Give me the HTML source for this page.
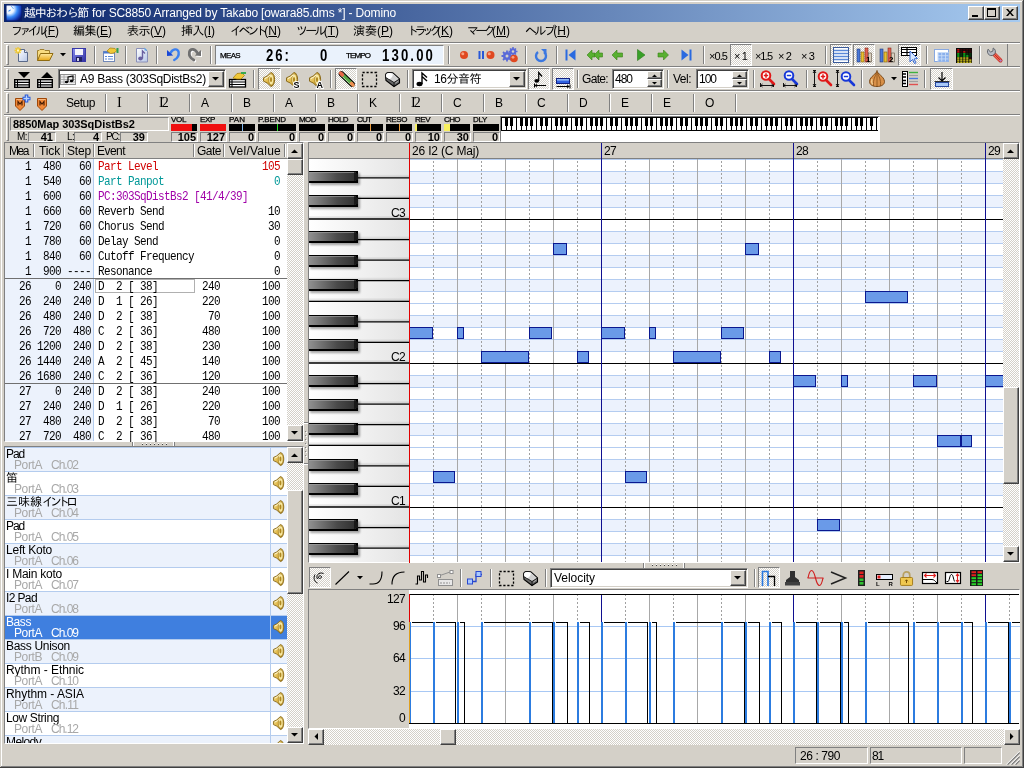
<!DOCTYPE html>
<html lang="ja"><head><meta charset="utf-8"><title>Domino</title>
<style>
html,body{margin:0;padding:0;background:#d4d0c8;overflow:hidden}
body{width:1024px;height:768px;position:relative;font-family:"Liberation Sans","IPAGothic","Noto Sans CJK JP",sans-serif;font-size:12px;color:#000}
#win{position:absolute;left:0;top:0;width:1024px;height:768px;overflow:hidden;background:#d4d0c8;will-change:transform}
#win div{position:absolute;box-sizing:border-box}
.t{white-space:nowrap;line-height:12px;font-size:12px}
.m{white-space:nowrap;font-family:"Liberation Mono","IPAGothic",monospace;font-size:11px;letter-spacing:-0.6px;line-height:12px;transform:scaleY(1.2);transform-origin:0 50%}
.mr{white-space:nowrap;font-family:"Liberation Mono","IPAGothic",monospace;font-size:11px;letter-spacing:-0.6px;line-height:12px;transform:scaleY(1.2);transform-origin:100% 50%;text-align:right}
.b{white-space:nowrap;font-weight:bold;font-size:11px;line-height:11px}
.raised{background:#d4d0c8;border:1px solid;border-color:#fff #404040 #404040 #fff;box-shadow:inset -1px -1px 0 #808080,inset 1px 1px 0 #d4d0c8}
.sunken{border:1px solid;border-color:#808080 #fff #fff #808080;box-shadow:inset 1px 1px 0 #404040,inset -1px -1px 0 #d4d0c8}
.sunk1{border:1px solid;border-color:#808080 #fff #fff #808080}
.chk{background-color:#fff;background-image:linear-gradient(45deg,#d4d0c8 25%,transparent 25%,transparent 75%,#d4d0c8 75%),linear-gradient(45deg,#d4d0c8 25%,transparent 25%,transparent 75%,#d4d0c8 75%);background-size:2px 2px;background-position:0 0,1px 1px}
svg{position:absolute;overflow:visible}

</style></head><body>
<div id="win">
<div style="left:0px;top:0px;width:1024px;height:768px;background:#d4d0c8"></div>
<div style="left:1px;top:1px;width:1021px;height:1px;background:#ffffff"></div>
<div style="left:1px;top:1px;width:1px;height:765px;background:#ffffff"></div>
<div style="left:1022px;top:1px;width:1px;height:766px;background:#808080"></div>
<div style="left:1px;top:766px;width:1022px;height:1px;background:#808080"></div>
<div style="left:1023px;top:0px;width:1px;height:768px;background:#404040"></div>
<div style="left:0px;top:767px;width:1024px;height:1px;background:#404040"></div>
<div style="left:4px;top:4px;width:1016px;height:18px;background:linear-gradient(90deg,#0a246a 0%,#a6caf0 100%)"></div>
<svg style="left:6px;top:5px" width="16" height="16" viewBox="0 0 16 16"><defs><radialGradient id="ig" cx="0.2" cy="0.25" r="0.95"><stop offset="0" stop-color="#ffffff"/><stop offset="0.3" stop-color="#e8f2ff"/><stop offset="0.55" stop-color="#3c8cf8"/><stop offset="0.85" stop-color="#1030a8"/><stop offset="1" stop-color="#081a68"/></radialGradient></defs><rect x="0" y="0" width="16" height="16" fill="#081a68"/><rect x="0.5" y="0.5" width="15" height="15" fill="url(#ig)"/><path d="M2 6.5 Q2.5 4.5 5 4.5 Q4.5 7 2 6.5 Z M5 1.5 L7.5 3.5 L6 2 Z" fill="#4a98f8"/><path d="M5 1 Q7 2.5 7.5 4" stroke="#58a0f8" stroke-width=".8" fill="none"/></svg>
<div class="t" style="left:24px;top:7px;color:#fff;letter-spacing:-1.33px">越中おわら節</div>
<div class="t" style="left:92px;top:7px;color:#fff;letter-spacing:-0.16px">for SC8850 Arranged by Takabo [owara85.dms *] - Domino</div>
<div class="raised" style="left:968px;top:6px;width:16px;height:14px;"></div>
<div style="left:972px;top:15px;width:6px;height:2px;background:#000"></div>
<div class="raised" style="left:984px;top:6px;width:16px;height:14px;"></div>
<div style="left:987px;top:8px;width:9px;height:9px;border:1px solid #000;border-top:2px solid #000"></div>
<div class="raised" style="left:1002px;top:6px;width:16px;height:14px;"></div>
<svg style="left:1006px;top:9px" width="8" height="7" viewBox="0 0 8 7"><path d="M0 0 H2 L4 2.5 L6 0 H8 L5 3.5 L8 7 H6 L4 4.5 L2 7 H0 L3 3.5 Z" fill="#000"/></svg>
<div class="t" style="left:11px;top:25px;"><span style="letter-spacing:-3.84px">ファイル</span>(<u>F</u>)</div>
<div class="t" style="left:73px;top:25px;"><span style="letter-spacing:-0.51px">編集</span>(<u>E</u>)</div>
<div class="t" style="left:127px;top:25px;"><span style="letter-spacing:-0.51px">表示</span>(<u>V</u>)</div>
<div class="t" style="left:181px;top:25px;"><span style="letter-spacing:-0.67px">挿入</span>(<u>I</u>)</div>
<div class="t" style="left:230px;top:25px;"><span style="letter-spacing:-3.42px">イベント</span>(<u>N</u>)</div>
<div class="t" style="left:296px;top:25px;"><span style="letter-spacing:-2.78px">ツール</span>(<u>T</u>)</div>
<div class="t" style="left:353px;top:25px;"><span style="letter-spacing:-0.01px">演奏</span>(<u>P</u>)</div>
<div class="t" style="left:407px;top:25px;"><span style="letter-spacing:-4.50px">トラック</span>(<u>K</u>)</div>
<div class="t" style="left:467px;top:25px;"><span style="letter-spacing:-3.67px">マーク</span>(<u>M</u>)</div>
<div class="t" style="left:525px;top:25px;"><span style="letter-spacing:-2.56px">ヘルプ</span>(<u>H</u>)</div>
<svg width="0" height="0" style="left:0;top:0"><defs>
<linearGradient id="gPage" x1="0" y1="0" x2="1" y2="1"><stop offset="0" stop-color="#ffffff"/><stop offset="1" stop-color="#b8c8e8"/></linearGradient>
<linearGradient id="gFold" x1="0" y1="0" x2="0" y2="1"><stop offset="0" stop-color="#ffe9a0"/><stop offset="1" stop-color="#e8a818"/></linearGradient>
<linearGradient id="gSave" x1="0" y1="0" x2="1" y2="1"><stop offset="0" stop-color="#8a8ef0"/><stop offset="1" stop-color="#3030a0"/></linearGradient>
<linearGradient id="gSpk" x1="0" y1="0" x2="1" y2="0"><stop offset="0" stop-color="#fff4c0"/><stop offset="0.5" stop-color="#e8c050"/><stop offset="1" stop-color="#a07818"/></linearGradient>
<linearGradient id="gSpk2" x1="0" y1="0" x2="1" y2="1"><stop offset="0" stop-color="#f8e8a8"/><stop offset="0.5" stop-color="#e0b848"/><stop offset="1" stop-color="#a07818"/></linearGradient>
<linearGradient id="gBk" x1="0" y1="0" x2="1" y2="0"><stop offset="0" stop-color="#909090"/><stop offset="0.6" stop-color="#4a4a4a"/><stop offset="1" stop-color="#303030"/></linearGradient>
<linearGradient id="gWk" x1="0" y1="0" x2="1" y2="0"><stop offset="0" stop-color="#ffffff"/><stop offset="1" stop-color="#e4e4e4"/></linearGradient>
</defs></svg>
<div style="left:4px;top:42px;width:1016px;height:1px;background:#808080"></div>
<div style="left:4px;top:43px;width:1016px;height:1px;background:#ffffff"></div>
<div style="left:4px;top:66px;width:1016px;height:1px;background:#808080"></div>
<div style="left:4px;top:67px;width:1016px;height:1px;background:#ffffff"></div>
<div style="left:4px;top:90px;width:1016px;height:1px;background:#808080"></div>
<div style="left:4px;top:91px;width:1016px;height:1px;background:#ffffff"></div>
<div style="left:4px;top:114px;width:1016px;height:1px;background:#808080"></div>
<div style="left:4px;top:115px;width:1016px;height:1px;background:#ffffff"></div>
<div style="left:6px;top:45px;width:3px;height:20px;background:#d4d0c8;border-left:1px solid #ffffff;border-top:1px solid #ffffff;border-right:1px solid #808080;border-bottom:1px solid #808080"></div>
<div style="left:6px;top:69px;width:3px;height:20px;background:#d4d0c8;border-left:1px solid #ffffff;border-top:1px solid #ffffff;border-right:1px solid #808080;border-bottom:1px solid #808080"></div>
<div style="left:6px;top:93px;width:3px;height:20px;background:#d4d0c8;border-left:1px solid #ffffff;border-top:1px solid #ffffff;border-right:1px solid #808080;border-bottom:1px solid #808080"></div>
<svg style="left:14px;top:46px" width="16" height="17" viewBox="0 0 16 17" ><path d="M4.5 3.5 H10.5 L13.5 6.5 V15.5 H4.5 Z" fill="url(#gPage)" stroke="#5a6a8a"/><path d="M10.5 3.5 V6.5 H13.5" fill="#e8eef8" stroke="#5a6a8a"/><path d="M4 1 V8 M0.5 4.5 H7.5 M1.5 2 L6.5 7 M6.5 2 L1.5 7" stroke="#f0c830" stroke-width="1.3"/><rect x="3" y="3.5" width="2" height="2" fill="#fff8c0"/></svg>
<svg style="left:37px;top:48px" width="17" height="14" viewBox="0 0 17 14" ><path d="M0.5 12.5 V2.5 H2 L3 1.5 H7 L8 2.5 H12.5 V5" fill="#f8dc80" stroke="#a08030"/><path d="M0.5 12.5 L3.5 5.5 H16 L12.5 12.5 Z" fill="url(#gFold)" stroke="#906c10"/></svg>
<svg style="left:60px;top:53px" width="6" height="4" viewBox="0 0 6 4" ><path d="M0 0 H6 L3 3.2 Z" fill="#000"/></svg>
<svg style="left:72px;top:48px" width="14" height="14" viewBox="0 0 14 14" ><rect x="0.5" y="0.5" width="13" height="13" fill="url(#gSave)" stroke="#3838a8"/><rect x="3" y="1" width="8" height="6" fill="#f4f4fc"/><rect x="4" y="9" width="6" height="4.5" fill="#202060"/><rect x="5" y="10" width="2" height="3" fill="#d0d0e8"/></svg>
<div style="left:94px;top:46px;width:1px;height:18px;background:#808080"></div>
<div style="left:95px;top:46px;width:1px;height:18px;background:#ffffff"></div>
<svg style="left:102px;top:47px" width="17" height="15" viewBox="0 0 17 15" ><rect x="1.5" y="4.5" width="11" height="10" fill="#fff" stroke="#7088b8"/><rect x="1.5" y="4.5" width="11" height="2" fill="#4a78d0"/><path d="M3 9.5 H5 M6 9.5 H11 M3 12 H5 M6 12 H11" stroke="#5a88d8" stroke-width="1.2"/><path d="M5 4 L8 1 L13 1.5 L15 3.5 L12 6 L8.5 6.5 Z" fill="#f0c838" stroke="#b08818" stroke-width=".8"/><rect x="14.5" y="1" width="2" height="5" fill="#30a050"/></svg>
<div style="left:125px;top:46px;width:1px;height:18px;background:#808080"></div>
<div style="left:126px;top:46px;width:1px;height:18px;background:#ffffff"></div>
<svg style="left:135px;top:47px" width="14" height="16" viewBox="0 0 14 16" ><path d="M1.5 1.5 H9.5 L12.5 4.5 V15 H1.5 Z" fill="url(#gPage)" stroke="#8a90b8"/><path d="M9.5 0.5 L12.5 3.5 H9.5 Z" fill="#58a0e8"/><ellipse cx="5.5" cy="11.5" rx="2.3" ry="1.9" fill="#6a60a0"/><path d="M7.5 11.5 V4 L10 6.5" fill="none" stroke="#6a60a0" stroke-width="1.4"/></svg>
<div style="left:156px;top:46px;width:1px;height:18px;background:#808080"></div>
<div style="left:157px;top:46px;width:1px;height:18px;background:#ffffff"></div>
<svg style="left:166px;top:47px" width="15" height="15" viewBox="0 0 15 15" ><path d="M4.5 6 C6.5 2 11.5 0.8 12.6 5 C13.2 8.5 11 11.5 8.2 13" fill="none" stroke="#3c80f0" stroke-width="2.4" stroke-linecap="round"/><path d="M1 3 V9 L7.2 8.6 Z" fill="#1848d8"/></svg>
<svg style="left:187px;top:47px" width="16" height="15" viewBox="0 0 16 15" ><g transform="translate(1,1)"><path d="M10.5 6 C8.5 2 3.5 0.8 2.4 5 C1.8 8.5 4 11.5 6.8 13" fill="none" stroke="#fff" stroke-width="2.8" stroke-linecap="round"/><path d="M14 3 V9 L7.8 8.6 Z" fill="#fff"/></g><path d="M10.5 6 C8.5 2 3.5 0.8 2.4 5 C1.8 8.5 4 11.5 6.8 13" fill="none" stroke="#707070" stroke-width="2.8" stroke-linecap="round"/><path d="M14 3 V9 L7.8 8.6 Z" fill="#707070"/></svg>
<div style="left:210px;top:46px;width:1px;height:18px;background:#808080"></div>
<div style="left:211px;top:46px;width:1px;height:18px;background:#ffffff"></div>
<div style="left:215px;top:45px;width:229px;height:20px;background:#eaf2fc;border:1px solid;border-color:#808080 #fff #fff #808080"></div>
<div class="t" style="left:220px;top:52px;font-size:8px;line-height:8px;-webkit-text-stroke:.25px #000;letter-spacing:-0.67px">MEAS</div>
<div class="t lcd" style="left:266px;top:48px;font-size:16px;line-height:15px;font-weight:bold;transform:scaleX(.82);transform-origin:0 0;letter-spacing:2.45px">26:</div>
<div class="t lcd" style="left:320px;top:48px;font-size:16px;line-height:15px;font-weight:bold;transform:scaleX(.82);transform-origin:0 0;letter-spacing:0.85px">0</div>
<div class="t" style="left:346px;top:52px;font-size:8px;line-height:8px;-webkit-text-stroke:.25px #000;letter-spacing:-0.89px">TEMPO</div>
<div class="t lcd" style="left:382px;top:48px;font-size:16px;line-height:15px;font-weight:bold;transform:scaleX(.82);transform-origin:0 0;letter-spacing:2.62px">130.00</div>
<div style="left:448px;top:46px;width:1px;height:18px;background:#808080"></div>
<div style="left:449px;top:46px;width:1px;height:18px;background:#ffffff"></div>
<svg style="left:459px;top:50px" width="10" height="10" viewBox="0 0 10 10" ><circle cx="5" cy="5" r="4" fill="#e04820"/><circle cx="3.8" cy="3.8" r="1.5" fill="#f8a080"/></svg>
<svg style="left:478px;top:50px" width="18" height="10" viewBox="0 0 18 10" ><rect x="0.5" y="1" width="2" height="8" fill="#2858d8"/><rect x="4" y="1" width="2" height="8" fill="#2858d8"/><circle cx="12.5" cy="5" r="4" fill="#e04820"/><circle cx="11.3" cy="3.8" r="1.5" fill="#f8a080"/></svg>
<svg style="left:501px;top:47px" width="18" height="16" viewBox="0 0 18 16" ><g fill="#5a6ad8"><circle cx="6" cy="9" r="4"/><circle cx="12" cy="4.5" r="3.2"/><path d="M6 3.5 V14.5 M0.5 9 H11.5 M2 5 L10 13 M10 5 L2 13" stroke="#5a6ad8" stroke-width="1.8"/><path d="M12 0 V9 M7.5 4.5 H16.5 M9 1.5 L15 7.5 M15 1.5 L9 7.5" stroke="#5a6ad8" stroke-width="1.5"/></g><circle cx="6" cy="9" r="1.5" fill="#d4d0c8"/><circle cx="12" cy="4.5" r="1.2" fill="#d4d0c8"/><circle cx="13" cy="11.5" r="3.8" fill="#e04820"/><circle cx="12" cy="10.3" r="1.4" fill="#f8a080"/></svg>
<div style="left:525px;top:46px;width:1px;height:18px;background:#808080"></div>
<div style="left:526px;top:46px;width:1px;height:18px;background:#ffffff"></div>
<svg style="left:534px;top:49px" width="14" height="13" viewBox="0 0 14 13" ><path d="M4 3 A5 5 0 1 0 10 3" fill="none" stroke="#3c78e0" stroke-width="2.4"/><path d="M7 0 H12.5 V5.5 Z" fill="#3c78e0"/></svg>
<div style="left:556px;top:46px;width:1px;height:18px;background:#808080"></div>
<div style="left:557px;top:46px;width:1px;height:18px;background:#ffffff"></div>
<svg style="left:565px;top:49px" width="11" height="12" viewBox="0 0 11 12" ><rect x="0.5" y="0.5" width="2" height="11" fill="#2a6ae0"/><path d="M10.5 0.5 V11.5 L3.5 6 Z" fill="#2a6ae0"/></svg>
<svg style="left:587px;top:50px" width="16" height="10" viewBox="0 0 16 10" ><path d="M0 5 L5 0 V3 H8 V7 H5 V10 Z" fill="#58b030" stroke="#3a8018" stroke-width=".6"/><path d="M7 5 L12 0 V3 H15.5 V7 H12 V10 Z" fill="#58b030" stroke="#3a8018" stroke-width=".6"/></svg>
<svg style="left:612px;top:50px" width="11" height="10" viewBox="0 0 11 10" ><path d="M0 5 L5 0 V3 H10.5 V7 H5 V10 Z" fill="#58b030" stroke="#3a8018" stroke-width=".6"/></svg>
<svg style="left:637px;top:49px" width="9" height="12" viewBox="0 0 9 12" ><path d="M0.5 0.5 L8 6 L0.5 11.5 Z" fill="#38a028" stroke="#2a7a18" stroke-width=".6"/></svg>
<svg style="left:658px;top:50px" width="11" height="10" viewBox="0 0 11 10" ><path d="M10.5 5 L5.5 0 V3 H0 V7 H5.5 V10 Z" fill="#58b030" stroke="#3a8018" stroke-width=".6"/></svg>
<svg style="left:681px;top:49px" width="11" height="12" viewBox="0 0 11 12" ><rect x="8.5" y="0.5" width="2" height="11" fill="#2a6ae0"/><path d="M0.5 0.5 V11.5 L7.5 6 Z" fill="#2a6ae0"/></svg>
<div style="left:703px;top:46px;width:1px;height:18px;background:#808080"></div>
<div style="left:704px;top:46px;width:1px;height:18px;background:#ffffff"></div>
<div class="chk" style="left:730px;top:44px;width:22px;height:22px;border:1px solid;border-color:#808080 #ffffff #ffffff #808080"></div>
<div class="t" style="left:709px;top:50px;font-size:11px;letter-spacing:-0.93px">×0.5</div>
<div class="t" style="left:734px;top:50px;font-size:11px;letter-spacing:-0.87px">× 1</div>
<div class="t" style="left:755px;top:50px;font-size:11px;letter-spacing:-1.18px">×1.5</div>
<div class="t" style="left:778px;top:50px;font-size:11px;letter-spacing:-0.87px">× 2</div>
<div class="t" style="left:801px;top:50px;font-size:11px;letter-spacing:-0.87px">× 3</div>
<div style="left:825px;top:46px;width:1px;height:18px;background:#808080"></div>
<div style="left:826px;top:46px;width:1px;height:18px;background:#ffffff"></div>
<div class="chk" style="left:830px;top:44px;width:22px;height:22px;border:1px solid;border-color:#808080 #ffffff #ffffff #808080"></div>
<svg style="left:833px;top:47px" width="16" height="16" viewBox="0 0 16 16" ><rect x="0.5" y="0.5" width="15" height="15" fill="#fff" stroke="#3a5a9a"/><path d="M1 3.5 H15 M1 6.5 H15 M1 9.5 H15 M1 12.5 H15" stroke="#5a88d8" stroke-width="1.4"/></svg>
<div class="chk" style="left:853px;top:44px;width:22px;height:22px;border:1px solid;border-color:#808080 #ffffff #ffffff #808080"></div>
<svg style="left:856px;top:47px" width="16" height="16" viewBox="0 0 16 16" ><rect x="1" y="2" width="3" height="13" fill="#4a78d8" stroke="#203878" stroke-width=".6"/><rect x="5" y="5" width="3" height="10" fill="#e8c030" stroke="#806010" stroke-width=".6"/><rect x="9" y="1" width="3" height="14" fill="#e06050" stroke="#802818" stroke-width=".6"/><rect x="12.5" y="6" width="3" height="9" fill="#d8d0c0" stroke="#605040" stroke-width=".6"/><text x="10" y="15" font-size="8" font-family="Liberation Sans,sans-serif" font-weight="bold" fill="#000">1</text></svg>
<svg style="left:879px;top:47px" width="16" height="16" viewBox="0 0 16 16" ><rect x="1" y="2" width="3" height="13" fill="#4a78d8" stroke="#203878" stroke-width=".6"/><rect x="5" y="5" width="3" height="10" fill="#e8c030" stroke="#806010" stroke-width=".6"/><rect x="9" y="1" width="3" height="14" fill="#e06050" stroke="#802818" stroke-width=".6"/><rect x="12.5" y="6" width="3" height="9" fill="#d8d0c0" stroke="#605040" stroke-width=".6"/><text x="10" y="15" font-size="8" font-family="Liberation Sans,sans-serif" font-weight="bold" fill="#000">2</text></svg>
<div class="chk" style="left:898px;top:44px;width:23px;height:22px;border:1px solid;border-color:#808080 #ffffff #ffffff #808080"></div>
<svg style="left:901px;top:46px" width="18" height="18" viewBox="0 0 18 18" ><rect x="0.5" y="1.5" width="15" height="8" fill="#fff" stroke="#000"/><path d="M1 3.5 H15 M1 6.5 H15 M6 2 V9" stroke="#000" stroke-width="1.2"/><path d="M9 5 L9 16 L11.5 13.5 L13.5 17.5 L15 16.8 L13 13 L16.5 12.5 Z" fill="#d8e8ff" stroke="#3a6ad0" stroke-width="1"/></svg>
<div style="left:926px;top:46px;width:1px;height:18px;background:#808080"></div>
<div style="left:927px;top:46px;width:1px;height:18px;background:#ffffff"></div>
<svg style="left:934px;top:49px" width="15" height="13" viewBox="0 0 15 13" ><rect x="0.5" y="0.5" width="14" height="12" fill="#fff" stroke="#88a8e0"/><rect x="3.5" y="3" width="11" height="9.5" fill="#c8dcf8"/><rect x="4.5" y="4.0" width="2.8" height="2.3" fill="#8ab0ec"/><rect x="8.2" y="4.0" width="2.8" height="2.3" fill="#8ab0ec"/><rect x="11.9" y="4.0" width="2.8" height="2.3" fill="#8ab0ec"/><rect x="4.5" y="7.2" width="2.8" height="2.3" fill="#8ab0ec"/><rect x="8.2" y="7.2" width="2.8" height="2.3" fill="#8ab0ec"/><rect x="11.9" y="7.2" width="2.8" height="2.3" fill="#8ab0ec"/><rect x="4.5" y="10.4" width="2.8" height="2.3" fill="#8ab0ec"/><rect x="8.2" y="10.4" width="2.8" height="2.3" fill="#8ab0ec"/><rect x="11.9" y="10.4" width="2.8" height="2.3" fill="#8ab0ec"/><rect x="1" y="1" width="13" height="2" fill="#fff"/></svg>
<svg style="left:956px;top:48px" width="16" height="15" viewBox="0 0 16 15" ><rect x="0" y="0" width="16" height="15" fill="#080808"/><rect x="1.2" y="1.2" width="2.2" height="1.3" fill="#f01010"/><rect x="4.2" y="1.2" width="2.2" height="1.3" fill="#400808"/><rect x="7.2" y="1.2" width="2.2" height="1.3" fill="#400808"/><rect x="10.2" y="1.2" width="2.2" height="1.3" fill="#400808"/><rect x="13.2" y="1.2" width="2.2" height="1.3" fill="#400808"/><rect x="1.2" y="3.25" width="2.2" height="1.3" fill="#f01010"/><rect x="4.2" y="3.25" width="2.2" height="1.3" fill="#400808"/><rect x="7.2" y="3.25" width="2.2" height="1.3" fill="#f01010"/><rect x="10.2" y="3.25" width="2.2" height="1.3" fill="#400808"/><rect x="13.2" y="3.25" width="2.2" height="1.3" fill="#400808"/><rect x="1.2" y="5.3" width="2.2" height="1.3" fill="#10e020"/><rect x="4.2" y="5.3" width="2.2" height="1.3" fill="#084810"/><rect x="7.2" y="5.3" width="2.2" height="1.3" fill="#10e020"/><rect x="10.2" y="5.3" width="2.2" height="1.3" fill="#084810"/><rect x="13.2" y="5.3" width="2.2" height="1.3" fill="#084810"/><rect x="1.2" y="7.35" width="2.2" height="1.3" fill="#10e020"/><rect x="4.2" y="7.35" width="2.2" height="1.3" fill="#084810"/><rect x="7.2" y="7.35" width="2.2" height="1.3" fill="#10e020"/><rect x="10.2" y="7.35" width="2.2" height="1.3" fill="#10e020"/><rect x="13.2" y="7.35" width="2.2" height="1.3" fill="#084810"/><rect x="1.2" y="9.399999999999999" width="2.2" height="1.3" fill="#f0e020"/><rect x="4.2" y="9.399999999999999" width="2.2" height="1.3" fill="#f0e020"/><rect x="7.2" y="9.399999999999999" width="2.2" height="1.3" fill="#f0e020"/><rect x="10.2" y="9.399999999999999" width="2.2" height="1.3" fill="#f0e020"/><rect x="13.2" y="9.399999999999999" width="2.2" height="1.3" fill="#400808"/><rect x="1.2" y="11.45" width="2.2" height="1.3" fill="#f0e020"/><rect x="4.2" y="11.45" width="2.2" height="1.3" fill="#f0e020"/><rect x="7.2" y="11.45" width="2.2" height="1.3" fill="#f0e020"/><rect x="10.2" y="11.45" width="2.2" height="1.3" fill="#f0e020"/><rect x="13.2" y="11.45" width="2.2" height="1.3" fill="#f0e020"/><rect x="1.2" y="13.499999999999998" width="2.2" height="1.3" fill="#f0e020"/><rect x="4.2" y="13.499999999999998" width="2.2" height="1.3" fill="#f0e020"/><rect x="7.2" y="13.499999999999998" width="2.2" height="1.3" fill="#f0e020"/><rect x="10.2" y="13.499999999999998" width="2.2" height="1.3" fill="#f0e020"/><rect x="13.2" y="13.499999999999998" width="2.2" height="1.3" fill="#f0e020"/></svg>
<div style="left:979px;top:46px;width:1px;height:18px;background:#808080"></div>
<div style="left:980px;top:46px;width:1px;height:18px;background:#ffffff"></div>
<svg style="left:986px;top:46px" width="17" height="17" viewBox="0 0 17 17" ><path d="M8 8 L14.5 14.5" stroke="#d02818" stroke-width="4" stroke-linecap="round"/><path d="M8.2 6.8 L14.8 13.4 M7 8.2 L13.4 14.8" stroke="#f8a090" stroke-width=".8"/><circle cx="14.6" cy="14.6" r="1.2" fill="#b080c0"/><path d="M2.2 3.2 A4 4 0 1 0 7.2 2 L6.8 5.2 L4.6 6 L3 4.6 Z" fill="#b8bcc4" stroke="#585c64" stroke-width=".9"/></svg>
<div style="left:1007px;top:44px;width:1px;height:22px;background:#808080"></div>
<svg style="left:14px;top:72px" width="17" height="16" viewBox="0 0 17 16" ><path d="M4 0 H16 L10 6 Z" fill="#000"/><rect x="0.7" y="7.7" width="14.6" height="7.6" fill="#fff" stroke="#000" stroke-width="1.4"/><path d="M1 10.3 H15 M1 12.8 H15" stroke="#000" stroke-width="1.2"/><path d="M3.5 8 V15" stroke="#000" stroke-width="1"/></svg>
<svg style="left:37px;top:72px" width="17" height="16" viewBox="0 0 17 16" ><path d="M4 6 H16 L10 0 Z" fill="#000"/><rect x="0.7" y="7.7" width="14.6" height="7.6" fill="#fff" stroke="#000" stroke-width="1.4"/><path d="M1 10.3 H15 M1 12.8 H15" stroke="#000" stroke-width="1.2"/><path d="M3.5 8 V15" stroke="#000" stroke-width="1"/></svg>
<div class="sunken" style="left:58px;top:69px;width:168px;height:20px;background:#fff"></div>
<div class="raised" style="left:208px;top:71px;width:16px;height:16px;"></div>
<svg style="left:212px;top:77px" width="8" height="4" viewBox="0 0 8 4" ><path d="M0 0 H7 L3.5 3.5 Z" fill="#000"/></svg>
<svg style="left:60px;top:72px" width="16" height="14" viewBox="0 0 16 14" ><rect x="0.5" y="2.5" width="15" height="10" fill="#f0f0f0" stroke="#909090"/><path d="M1 5 H15 M1 7.5 H15 M1 10 H15 M4 3 V12" stroke="#a0a0a0" stroke-width=".8"/><ellipse cx="6.5" cy="10" rx="1.7" ry="1.3" fill="#000"/><ellipse cx="11.5" cy="9" rx="1.7" ry="1.3" fill="#000"/><path d="M8 10 V5 L13 4 V9" fill="none" stroke="#000" stroke-width="1.1"/></svg>
<div class="t" style="left:80px;top:73px;;letter-spacing:-0.28px">A9 Bass (303SqDistBs2)</div>
<svg style="left:229px;top:71px" width="18" height="17" viewBox="0 0 18 17" ><rect x="0.5" y="8.5" width="16" height="7.5" fill="#fff" stroke="#000" stroke-width="1.3"/><path d="M1 11 H16 M1 13.5 H16 M3 9 V16" stroke="#000" stroke-width="1.1"/><path d="M4 7 L8 2.5 L13 2 L15.5 4.5 L12 8 L8 8 Z" fill="#f0c838" stroke="#a88010" stroke-width=".8"/><rect x="12" y="1" width="5" height="2" fill="#38a850"/></svg>
<div style="left:253px;top:70px;width:1px;height:18px;background:#808080"></div>
<div style="left:254px;top:70px;width:1px;height:18px;background:#ffffff"></div>
<div class="chk" style="left:258px;top:68px;width:23px;height:22px;border:1px solid;border-color:#808080 #ffffff #ffffff #808080"></div>
<svg style="left:263px;top:72px" width="14" height="16" viewBox="0 0 14 16" ><path d="M0.5 5.8 V9.2 Q4 10 8 14.5 A3.6 7 0 0 0 8 0.5 Q4 5 0.5 5.8 Z" fill="url(#gSpk2)" stroke="#806010" stroke-width=".9"/><ellipse cx="8.3" cy="7.5" rx="2.6" ry="5.6" fill="#f8e8a0" stroke="#a07818" stroke-width=".7"/><ellipse cx="8" cy="7.5" rx="1.1" ry="2.6" fill="#b08820"/><path d="M2 6.5 Q5 5.5 7.5 2.5" stroke="#fff8d8" stroke-width="1" fill="none"/></svg>
<svg style="left:286px;top:72px" width="14" height="16" viewBox="0 0 14 16" ><path d="M0.5 5.8 V9.2 Q4 10 8 14.5 A3.6 7 0 0 0 8 0.5 Q4 5 0.5 5.8 Z" fill="url(#gSpk2)" stroke="#806010" stroke-width=".9"/><ellipse cx="8.3" cy="7.5" rx="2.6" ry="5.6" fill="#f8e8a0" stroke="#a07818" stroke-width=".7"/><ellipse cx="8" cy="7.5" rx="1.1" ry="2.6" fill="#b08820"/><path d="M2 6.5 Q5 5.5 7.5 2.5" stroke="#fff8d8" stroke-width="1" fill="none"/><text x="7.5" y="15.5" font-size="9" font-weight="bold" font-family="Liberation Sans,sans-serif" fill="#000" stroke="#fff" stroke-width="1.8" paint-order="stroke">S</text></svg>
<svg style="left:309px;top:72px" width="14" height="16" viewBox="0 0 14 16" ><path d="M0.5 5.8 V9.2 Q4 10 8 14.5 A3.6 7 0 0 0 8 0.5 Q4 5 0.5 5.8 Z" fill="url(#gSpk2)" stroke="#806010" stroke-width=".9"/><ellipse cx="8.3" cy="7.5" rx="2.6" ry="5.6" fill="#f8e8a0" stroke="#a07818" stroke-width=".7"/><ellipse cx="8" cy="7.5" rx="1.1" ry="2.6" fill="#b08820"/><path d="M2 6.5 Q5 5.5 7.5 2.5" stroke="#fff8d8" stroke-width="1" fill="none"/><text x="7.5" y="15.5" font-size="9" font-weight="bold" font-family="Liberation Sans,sans-serif" fill="#000" stroke="#fff" stroke-width="1.8" paint-order="stroke">A</text></svg>
<div style="left:330px;top:70px;width:1px;height:18px;background:#808080"></div>
<div style="left:331px;top:70px;width:1px;height:18px;background:#ffffff"></div>
<div class="chk" style="left:335px;top:68px;width:22px;height:22px;border:1px solid;border-color:#808080 #ffffff #ffffff #808080"></div>
<svg style="left:338px;top:71px" width="18" height="17" viewBox="0 0 18 17" ><path d="M3.5 3 L14 13" stroke="#000" stroke-width="5.6" stroke-linecap="round"/><path d="M3.5 3 L14 13" stroke="#58a848" stroke-width="3.6" stroke-linecap="butt"/><path d="M3 4.2 L13 13.8" stroke="#a8d898" stroke-width="1"/><path d="M2.6 2.2 L4.4 3.8" stroke="#e86848" stroke-width="3.6" stroke-linecap="round"/><path d="M13.4 12.4 L15 14" stroke="#f09050" stroke-width="3.4" stroke-linecap="round"/></svg>
<svg style="left:362px;top:72px" width="15" height="15" viewBox="0 0 15 15" ><rect x="0.5" y="0.5" width="14" height="14" fill="none" stroke="#000" stroke-width="1.3" stroke-dasharray="2.2 1.8"/></svg>
<svg style="left:384px;top:71px" width="17" height="17" viewBox="0 0 17 17" ><path d="M1.5 5 Q1.5 1 6 1.5 L9 2 L15.5 8 V12 L10 15.5 L2 9.5 Z" fill="#686868" stroke="#000" stroke-width="1.1"/><path d="M1.5 5 Q1.5 1 6 1.5 L9 2 L15.5 8 L10 11.5 L2 6.5 Z" fill="#d0d0d0" stroke="#000" stroke-width=".8"/><path d="M2 5 Q2 1.6 6 2 L8.6 2.4 Q9.5 5.5 5.5 8.2 L2.3 6.3 Z" fill="#fff"/><path d="M10 11.5 V15.5" stroke="#000" stroke-width=".8"/><path d="M11.5 12 L14.5 10" stroke="#b0b0b0" stroke-width="1"/></svg>
<div style="left:407px;top:70px;width:1px;height:18px;background:#808080"></div>
<div style="left:408px;top:70px;width:1px;height:18px;background:#ffffff"></div>
<div class="sunken" style="left:412px;top:69px;width:115px;height:20px;background:#fff"></div>
<div class="raised" style="left:509px;top:71px;width:16px;height:16px;"></div>
<svg style="left:513px;top:77px" width="8" height="4" viewBox="0 0 8 4" ><path d="M0 0 H7 L3.5 3.5 Z" fill="#000"/></svg>
<svg style="left:416px;top:72px" width="13" height="15" viewBox="0 0 13 15" ><ellipse cx="3.5" cy="12" rx="3" ry="2.2" fill="#000"/><path d="M6 12 V1 L11 5.5 M6 4.5 L11 9" fill="none" stroke="#000" stroke-width="1.4"/></svg>
<div class="t" style="left:434px;top:73px;;letter-spacing:-0.47px">16分音符</div>
<div class="chk" style="left:528px;top:68px;width:22px;height:22px;border:1px solid;border-color:#808080 #ffffff #ffffff #808080"></div>
<svg style="left:531px;top:71px" width="17" height="17" viewBox="0 0 17 17" ><ellipse cx="5.8" cy="9.8" rx="2.4" ry="1.9" fill="#000"/><path d="M7.7 9.8 V1.5 L11 5.5" fill="none" stroke="#000" stroke-width="1.2"/><path d="M3.5 12.5 V16.5 M3.5 14.5 H15 M6 12.8 L4.2 14.5 L6 16.2" fill="none" stroke="#000" stroke-width="1"/></svg>
<div class="chk" style="left:552px;top:68px;width:22px;height:22px;border:1px solid;border-color:#808080 #ffffff #ffffff #808080"></div>
<svg style="left:555px;top:73px" width="17" height="15" viewBox="0 0 17 15" ><rect x="1.5" y="5.5" width="13" height="5" fill="#3060e0" stroke="#102080"/><rect x="2" y="6" width="12" height="1.6" fill="#90b8f8"/><path d="M1.5 13.5 H14.5 M12 11.8 L13.8 13.5 L12 15.2 M15 11.5 V15.5" fill="none" stroke="#000" stroke-width="1"/></svg>
<div style="left:577px;top:70px;width:1px;height:18px;background:#808080"></div>
<div style="left:578px;top:70px;width:1px;height:18px;background:#ffffff"></div>
<div class="t" style="left:582px;top:73px;;letter-spacing:-0.67px">Gate:</div>
<div class="sunken" style="left:612px;top:69px;width:52px;height:20px;background:#fff"></div>
<div class="t" style="left:615px;top:73px;;letter-spacing:-1.01px">480</div>
<div class="raised" style="left:647px;top:71px;width:15px;height:8px;"></div>
<div class="raised" style="left:647px;top:79px;width:15px;height:8px;"></div>
<svg style="left:652px;top:74px" width="5" height="3" viewBox="0 0 5 3" ><path d="M0 3 H5 L2.5 0.5 Z" fill="#000"/></svg>
<svg style="left:652px;top:82px" width="5" height="3" viewBox="0 0 5 3" ><path d="M0 0 H5 L2.5 2.5 Z" fill="#000"/></svg>
<div style="left:667px;top:70px;width:1px;height:18px;background:#808080"></div>
<div style="left:668px;top:70px;width:1px;height:18px;background:#ffffff"></div>
<div class="t" style="left:673px;top:73px;;letter-spacing:-0.50px">Vel:</div>
<div class="sunken" style="left:696px;top:69px;width:53px;height:20px;background:#fff"></div>
<div class="t" style="left:699px;top:73px;;letter-spacing:-1.01px">100</div>
<div class="raised" style="left:732px;top:71px;width:15px;height:8px;"></div>
<div class="raised" style="left:732px;top:79px;width:15px;height:8px;"></div>
<svg style="left:737px;top:74px" width="5" height="3" viewBox="0 0 5 3" ><path d="M0 3 H5 L2.5 0.5 Z" fill="#000"/></svg>
<svg style="left:737px;top:82px" width="5" height="3" viewBox="0 0 5 3" ><path d="M0 0 H5 L2.5 2.5 Z" fill="#000"/></svg>
<div style="left:753px;top:70px;width:1px;height:18px;background:#808080"></div>
<div style="left:754px;top:70px;width:1px;height:18px;background:#ffffff"></div>
<svg style="left:760px;top:70px" width="16" height="18" viewBox="0 0 16 18" ><circle cx="6" cy="5.5" r="4.3" fill="#fff" stroke="#e01818" stroke-width="2"/><path d="M9 9 L14 14" stroke="#e01818" stroke-width="2.6" stroke-linecap="round"/><path d="M3.8 5.5 H8.2" stroke="#e01818" stroke-width="1.5"/><path d="M6 3.3 V7.7" stroke="#e01818" stroke-width="1.5"/><path d="M0.5 13 V17 M13.5 14.5 V17 M0.5 15.5 H13.5 M2.5 14 L0.8 15.5 L2.5 17 M11.5 14 L13.2 15.5 L11.5 17" fill="none" stroke="#000" stroke-width=".9"/></svg>
<svg style="left:783px;top:70px" width="16" height="18" viewBox="0 0 16 18" ><circle cx="6" cy="5.5" r="4.3" fill="#fff" stroke="#1838d8" stroke-width="2"/><path d="M9 9 L14 14" stroke="#1838d8" stroke-width="2.6" stroke-linecap="round"/><path d="M3.8 5.5 H8.2" stroke="#1838d8" stroke-width="1.5"/><path d="M0.5 13 V17 M13.5 14.5 V17 M0.5 15.5 H13.5 M2.5 14 L0.8 15.5 L2.5 17 M11.5 14 L13.2 15.5 L11.5 17" fill="none" stroke="#000" stroke-width=".9"/></svg>
<div style="left:806px;top:70px;width:1px;height:18px;background:#808080"></div>
<div style="left:807px;top:70px;width:1px;height:18px;background:#ffffff"></div>
<svg style="left:813px;top:70px" width="20" height="18" viewBox="0 0 20 18" ><path d="M1.5 0.5 V16.5 M0 0.5 H3 M0 16.5 H3 M0 3 L1.5 1 L3 3 M0 14 L1.5 16 L3 14" fill="none" stroke="#000" stroke-width=".9"/><g transform="translate(4,1)"><circle cx="6" cy="5.5" r="4.3" fill="#fff" stroke="#e01818" stroke-width="2"/><path d="M9 9 L14 14" stroke="#e01818" stroke-width="2.6" stroke-linecap="round"/><path d="M3.8 5.5 H8.2" stroke="#e01818" stroke-width="1.5"/><path d="M6 3.3 V7.7" stroke="#e01818" stroke-width="1.5"/></g></svg>
<svg style="left:836px;top:70px" width="20" height="18" viewBox="0 0 20 18" ><path d="M1.5 0.5 V16.5 M0 0.5 H3 M0 16.5 H3 M0 3 L1.5 1 L3 3 M0 14 L1.5 16 L3 14" fill="none" stroke="#000" stroke-width=".9"/><g transform="translate(4,1)"><circle cx="6" cy="5.5" r="4.3" fill="#fff" stroke="#1838d8" stroke-width="2"/><path d="M9 9 L14 14" stroke="#1838d8" stroke-width="2.6" stroke-linecap="round"/><path d="M3.8 5.5 H8.2" stroke="#1838d8" stroke-width="1.5"/></g></svg>
<div style="left:861px;top:70px;width:1px;height:18px;background:#808080"></div>
<div style="left:862px;top:70px;width:1px;height:18px;background:#ffffff"></div>
<svg style="left:868px;top:70px" width="18" height="17" viewBox="0 0 18 17" ><path d="M9 0.5 C9 4 2 6 1.5 11.5 C1.5 15 5 16.5 9 16.5 C13 16.5 16.5 15 16.5 11.5 C16 6 9 4 9 0.5 Z" fill="#d89048" stroke="#704010" stroke-width=".9"/><path d="M9 2 C7 7 5 9 5.5 16 M9 2 C11 7 13 9 12.5 16 M9 4 V16.5" fill="none" stroke="#8a5018" stroke-width=".8"/><path d="M4 9 C3.5 11 3.5 13 4.5 14.5" stroke="#f8d8a0" stroke-width="1.2" fill="none"/></svg>
<svg style="left:891px;top:77px" width="6" height="4" viewBox="0 0 6 4" ><path d="M0 0 H6 L3 3.2 Z" fill="#000"/></svg>
<svg style="left:902px;top:71px" width="17" height="16" viewBox="0 0 17 16" ><rect x="0.5" y="0.5" width="5" height="15" fill="#fff" stroke="#000"/><path d="M1 3 H4 M1 6 H4 M1 9.5 H4 M1 12.5 H4" stroke="#000" stroke-width="1.6"/><path d="M7 1.5 H16" stroke="#40b040" stroke-width="1.4"/><path d="M7 4.5 H16" stroke="#a0a0a0" stroke-width="1.2"/><path d="M7 7.5 H16" stroke="#4878e0" stroke-width="1.4"/><path d="M7 10.5 H16" stroke="#a0a0a0" stroke-width="1.2"/><path d="M7 13.5 H16" stroke="#e05050" stroke-width="1.4"/></svg>
<div style="left:924px;top:70px;width:1px;height:18px;background:#808080"></div>
<div style="left:925px;top:70px;width:1px;height:18px;background:#ffffff"></div>
<div class="chk" style="left:930px;top:68px;width:23px;height:22px;border:1px solid;border-color:#808080 #ffffff #ffffff #808080"></div>
<svg style="left:934px;top:71px" width="16" height="17" viewBox="0 0 16 17" ><path d="M8 1 V10 M4.5 6.5 L8 10 L11.5 6.5" fill="none" stroke="#000" stroke-width="1.2"/><rect x="1.5" y="11.5" width="13" height="4" fill="#a8c8f8" stroke="#2848a0"/><path d="M0.5 10.5 H15.5" stroke="#000" stroke-width=".8"/></svg>
<svg style="left:15px;top:98px" width="16" height="13" viewBox="0 0 16 13" ><path d="M0.5 0.5 H9.5 V8 L5 12.5 L0.5 8 Z" fill="#f08838" stroke="#a04808" stroke-width="1"/><path d="M1.5 1.5 H8.5" stroke="#f8b880" stroke-width="1"/><path d="M3 7.5 V3.5 L5 6 L7 3.5 V7.5" fill="none" stroke="#401800" stroke-width="1.1"/><path d="M11.5 -3.5 V4.5 M7.5 0.5 H15.5" stroke="#2858d8" stroke-width="3.6"/><path d="M11.5 -2.5 V3.5 M8.5 0.5 H14.5" stroke="#b8d4ff" stroke-width="1.4"/></svg>
<svg style="left:37px;top:98px" width="16" height="13" viewBox="0 0 16 13" ><path d="M0.5 0.5 H9.5 V8 L5 12.5 L0.5 8 Z" fill="#f08838" stroke="#a04808" stroke-width="1"/><path d="M1.5 1.5 H8.5" stroke="#f8b880" stroke-width="1"/><path d="M3 7.5 V3.5 L5 6 L7 3.5 V7.5" fill="none" stroke="#401800" stroke-width="1.1"/></svg>
<div style="left:105px;top:94px;width:1px;height:18px;background:#808080"></div>
<div style="left:106px;top:94px;width:1px;height:18px;background:#ffffff"></div>
<div class="t" style="left:66px;top:97px;;letter-spacing:-0.47px">Setup</div>
<div style="left:147px;top:94px;width:1px;height:18px;background:#808080"></div>
<div style="left:148px;top:94px;width:1px;height:18px;background:#ffffff"></div>
<div class="t" style="left:117px;top:97px;font-family:'Liberation Serif','IPAGothic',serif;font-size:14px;letter-spacing:-0.67px">I</div>
<div style="left:189px;top:94px;width:1px;height:18px;background:#808080"></div>
<div style="left:190px;top:94px;width:1px;height:18px;background:#ffffff"></div>
<div class="t" style="left:159px;top:97px;font-family:'Liberation Serif','IPAGothic',serif;font-size:14px;letter-spacing:-1.84px">I2</div>
<div style="left:231px;top:94px;width:1px;height:18px;background:#808080"></div>
<div style="left:232px;top:94px;width:1px;height:18px;background:#ffffff"></div>
<div class="t" style="left:201px;top:97px;;letter-spacing:-1.02px">A</div>
<div style="left:273px;top:94px;width:1px;height:18px;background:#808080"></div>
<div style="left:274px;top:94px;width:1px;height:18px;background:#ffffff"></div>
<div class="t" style="left:243px;top:97px;;letter-spacing:-1.02px">B</div>
<div style="left:315px;top:94px;width:1px;height:18px;background:#808080"></div>
<div style="left:316px;top:94px;width:1px;height:18px;background:#ffffff"></div>
<div class="t" style="left:285px;top:97px;;letter-spacing:-1.02px">A</div>
<div style="left:357px;top:94px;width:1px;height:18px;background:#808080"></div>
<div style="left:358px;top:94px;width:1px;height:18px;background:#ffffff"></div>
<div class="t" style="left:327px;top:97px;;letter-spacing:-1.02px">B</div>
<div style="left:399px;top:94px;width:1px;height:18px;background:#808080"></div>
<div style="left:400px;top:94px;width:1px;height:18px;background:#ffffff"></div>
<div class="t" style="left:369px;top:97px;;letter-spacing:-1.02px">K</div>
<div style="left:441px;top:94px;width:1px;height:18px;background:#808080"></div>
<div style="left:442px;top:94px;width:1px;height:18px;background:#ffffff"></div>
<div class="t" style="left:411px;top:97px;font-family:'Liberation Serif','IPAGothic',serif;font-size:14px;letter-spacing:-1.84px">I2</div>
<div style="left:483px;top:94px;width:1px;height:18px;background:#808080"></div>
<div style="left:484px;top:94px;width:1px;height:18px;background:#ffffff"></div>
<div class="t" style="left:453px;top:97px;;letter-spacing:-0.67px">C</div>
<div style="left:525px;top:94px;width:1px;height:18px;background:#808080"></div>
<div style="left:526px;top:94px;width:1px;height:18px;background:#ffffff"></div>
<div class="t" style="left:495px;top:97px;;letter-spacing:-1.02px">B</div>
<div style="left:567px;top:94px;width:1px;height:18px;background:#808080"></div>
<div style="left:568px;top:94px;width:1px;height:18px;background:#ffffff"></div>
<div class="t" style="left:537px;top:97px;;letter-spacing:-0.67px">C</div>
<div style="left:609px;top:94px;width:1px;height:18px;background:#808080"></div>
<div style="left:610px;top:94px;width:1px;height:18px;background:#ffffff"></div>
<div class="t" style="left:579px;top:97px;;letter-spacing:-1.67px">D</div>
<div style="left:651px;top:94px;width:1px;height:18px;background:#808080"></div>
<div style="left:652px;top:94px;width:1px;height:18px;background:#ffffff"></div>
<div class="t" style="left:621px;top:97px;;letter-spacing:-2.02px">E</div>
<div style="left:693px;top:94px;width:1px;height:18px;background:#808080"></div>
<div style="left:694px;top:94px;width:1px;height:18px;background:#ffffff"></div>
<div class="t" style="left:663px;top:97px;;letter-spacing:-2.02px">E</div>
<div style="left:735px;top:94px;width:1px;height:18px;background:#808080"></div>
<div style="left:736px;top:94px;width:1px;height:18px;background:#ffffff"></div>
<div class="t" style="left:705px;top:97px;;letter-spacing:-1.34px">O</div>
<div style="left:6px;top:117px;width:3px;height:24px;background:#d4d0c8;border-left:1px solid #ffffff;border-top:1px solid #ffffff;border-right:1px solid #808080;border-bottom:1px solid #808080"></div>
<div class="sunk1" style="left:10px;top:117px;width:159px;height:14px;"></div>
<div class="b" style="left:13px;top:119px;;letter-spacing:-0.05px">8850Map 303SqDistBs2</div>
<div class="t" style="left:17px;top:132px;font-size:10px;line-height:10px;letter-spacing:-0.55px">M:</div>
<div class="t" style="left:67px;top:132px;font-size:10px;line-height:10px;letter-spacing:-0.67px">L:</div>
<div class="t" style="left:106px;top:132px;font-size:10px;line-height:10px;letter-spacing:-1.22px">PC:</div>
<div class="sunk1" style="left:28px;top:132px;width:28px;height:10px;"></div>
<div class="b" style="right:971px;top:132px">41</div>
<div class="sunk1" style="left:74px;top:132px;width:28px;height:10px;"></div>
<div class="b" style="right:925px;top:132px">4</div>
<div class="sunk1" style="left:120px;top:132px;width:28px;height:10px;"></div>
<div class="b" style="right:879px;top:132px">39</div>
<div class="t" style="left:171px;top:116px;font-size:8px;line-height:8px;-webkit-text-stroke:.25px #000;letter-spacing:-0.34px">VOL</div>
<div style="left:171px;top:124px;width:26px;height:7px;background:#000"></div>
<div style="left:171px;top:124px;width:21px;height:7px;background:#f01010"></div>
<div class="sunk1" style="left:171px;top:132px;width:27px;height:10px;"></div>
<div class="b" style="right:828px;top:132px">105</div>
<div class="t" style="left:200px;top:116px;font-size:8px;line-height:8px;-webkit-text-stroke:.25px #000;letter-spacing:-0.34px">EXP</div>
<div style="left:200px;top:124px;width:26px;height:7px;background:#000"></div>
<div style="left:200px;top:124px;width:26px;height:7px;background:#f01010"></div>
<div class="sunk1" style="left:200px;top:132px;width:27px;height:10px;"></div>
<div class="b" style="right:799px;top:132px">127</div>
<div class="t" style="left:229px;top:116px;font-size:8px;line-height:8px;-webkit-text-stroke:.25px #000;letter-spacing:0.05px">PAN</div>
<div style="left:229px;top:124px;width:26px;height:7px;background:#000"></div>
<div style="left:242px;top:124px;width:1px;height:7px;background:#80b8f0"></div>
<div class="sunk1" style="left:229px;top:132px;width:27px;height:10px;"></div>
<div class="b" style="right:770px;top:132px">0</div>
<div class="t" style="left:258px;top:116px;font-size:8px;line-height:8px;-webkit-text-stroke:.25px #000;letter-spacing:-0.13px">P.BEND</div>
<div style="left:258px;top:124px;width:38px;height:7px;background:#000"></div>
<div style="left:277px;top:124px;width:1px;height:7px;background:#20e020"></div>
<div class="sunk1" style="left:258px;top:132px;width:39px;height:10px;"></div>
<div class="b" style="right:729px;top:132px">0</div>
<div class="t" style="left:299px;top:116px;font-size:8px;line-height:8px;-webkit-text-stroke:.25px #000;letter-spacing:-0.56px">MOD</div>
<div style="left:299px;top:124px;width:26px;height:7px;background:#000"></div>
<div class="sunk1" style="left:299px;top:132px;width:27px;height:10px;"></div>
<div class="b" style="right:700px;top:132px">0</div>
<div class="t" style="left:328px;top:116px;font-size:8px;line-height:8px;-webkit-text-stroke:.25px #000;letter-spacing:-0.56px">HOLD</div>
<div style="left:328px;top:124px;width:26px;height:7px;background:#000"></div>
<div class="sunk1" style="left:328px;top:132px;width:27px;height:10px;"></div>
<div class="b" style="right:671px;top:132px">0</div>
<div class="t" style="left:357px;top:116px;font-size:8px;line-height:8px;-webkit-text-stroke:.25px #000;letter-spacing:-0.82px">CUT</div>
<div style="left:357px;top:124px;width:26px;height:7px;background:#000"></div>
<div style="left:370px;top:124px;width:1px;height:7px;background:#f0a040"></div>
<div class="sunk1" style="left:357px;top:132px;width:27px;height:10px;"></div>
<div class="b" style="right:642px;top:132px">0</div>
<div class="t" style="left:386px;top:116px;font-size:8px;line-height:8px;-webkit-text-stroke:.25px #000;letter-spacing:-0.42px">RESO</div>
<div style="left:386px;top:124px;width:26px;height:7px;background:#000"></div>
<div style="left:399px;top:124px;width:1px;height:7px;background:#f0a040"></div>
<div class="sunk1" style="left:386px;top:132px;width:27px;height:10px;"></div>
<div class="b" style="right:613px;top:132px">0</div>
<div class="t" style="left:415px;top:116px;font-size:8px;line-height:8px;-webkit-text-stroke:.25px #000;letter-spacing:-0.48px">REV</div>
<div style="left:415px;top:124px;width:26px;height:7px;background:#000"></div>
<div style="left:415px;top:124px;width:2px;height:7px;background:#f8f060"></div>
<div class="sunk1" style="left:415px;top:132px;width:27px;height:10px;"></div>
<div class="b" style="right:584px;top:132px">10</div>
<div class="t" style="left:444px;top:116px;font-size:8px;line-height:8px;-webkit-text-stroke:.25px #000;letter-spacing:-0.59px">CHO</div>
<div style="left:444px;top:124px;width:26px;height:7px;background:#000"></div>
<div style="left:444px;top:124px;width:6px;height:7px;background:#f8f060"></div>
<div class="sunk1" style="left:444px;top:132px;width:27px;height:10px;"></div>
<div class="b" style="right:555px;top:132px">30</div>
<div class="t" style="left:473px;top:116px;font-size:8px;line-height:8px;-webkit-text-stroke:.25px #000;letter-spacing:-0.32px">DLY</div>
<div style="left:473px;top:124px;width:26px;height:7px;background:#000"></div>
<div class="sunk1" style="left:473px;top:132px;width:27px;height:10px;"></div>
<div class="b" style="right:526px;top:132px">0</div>
<div class="sunk1" style="left:500px;top:116px;width:380px;height:26px;background:#fff"></div>
<svg style="left:501px;top:117px" width="377" height="14" viewBox="0 0 377 14" ><rect x="0" y="0" width="377" height="14" fill="#fff"/><path d="M0.5 0 V14 M5.5 0 V14 M10.5 0 V14 M15.5 0 V14 M20.5 0 V14 M25.5 0 V14 M30.5 0 V14 M35.5 0 V14 M40.5 0 V14 M45.5 0 V14 M50.5 0 V14 M55.5 0 V14 M60.5 0 V14 M65.5 0 V14 M70.5 0 V14 M75.5 0 V14 M80.5 0 V14 M85.5 0 V14 M90.5 0 V14 M95.5 0 V14 M100.5 0 V14 M105.5 0 V14 M110.5 0 V14 M115.5 0 V14 M120.5 0 V14 M125.5 0 V14 M130.5 0 V14 M135.5 0 V14 M140.5 0 V14 M145.5 0 V14 M150.5 0 V14 M155.5 0 V14 M160.5 0 V14 M165.5 0 V14 M170.5 0 V14 M175.5 0 V14 M180.5 0 V14 M185.5 0 V14 M190.5 0 V14 M195.5 0 V14 M200.5 0 V14 M205.5 0 V14 M210.5 0 V14 M215.5 0 V14 M220.5 0 V14 M225.5 0 V14 M230.5 0 V14 M235.5 0 V14 M240.5 0 V14 M245.5 0 V14 M250.5 0 V14 M255.5 0 V14 M260.5 0 V14 M265.5 0 V14 M270.5 0 V14 M275.5 0 V14 M280.5 0 V14 M285.5 0 V14 M290.5 0 V14 M295.5 0 V14 M300.5 0 V14 M305.5 0 V14 M310.5 0 V14 M315.5 0 V14 M320.5 0 V14 M325.5 0 V14 M330.5 0 V14 M335.5 0 V14 M340.5 0 V14 M345.5 0 V14 M350.5 0 V14 M355.5 0 V14 M360.5 0 V14 M365.5 0 V14 M370.5 0 V14 M375.5 0 V14 " stroke="#000" stroke-width="1"/><path d="M0 13.5 H377 M0 0.5 H377" stroke="#000" stroke-width="1"/><g fill="#000"><rect x="4" y="1" width="3" height="8"/><rect x="9" y="1" width="3" height="8"/><rect x="19" y="1" width="3" height="8"/><rect x="24" y="1" width="3" height="8"/><rect x="29" y="1" width="3" height="8"/><rect x="39" y="1" width="3" height="8"/><rect x="44" y="1" width="3" height="8"/><rect x="54" y="1" width="3" height="8"/><rect x="59" y="1" width="3" height="8"/><rect x="64" y="1" width="3" height="8"/><rect x="74" y="1" width="3" height="8"/><rect x="79" y="1" width="3" height="8"/><rect x="89" y="1" width="3" height="8"/><rect x="94" y="1" width="3" height="8"/><rect x="99" y="1" width="3" height="8"/><rect x="109" y="1" width="3" height="8"/><rect x="114" y="1" width="3" height="8"/><rect x="124" y="1" width="3" height="8"/><rect x="129" y="1" width="3" height="8"/><rect x="134" y="1" width="3" height="8"/><rect x="144" y="1" width="3" height="8"/><rect x="149" y="1" width="3" height="8"/><rect x="159" y="1" width="3" height="8"/><rect x="164" y="1" width="3" height="8"/><rect x="169" y="1" width="3" height="8"/><rect x="179" y="1" width="3" height="8"/><rect x="184" y="1" width="3" height="8"/><rect x="194" y="1" width="3" height="8"/><rect x="199" y="1" width="3" height="8"/><rect x="204" y="1" width="3" height="8"/><rect x="214" y="1" width="3" height="8"/><rect x="219" y="1" width="3" height="8"/><rect x="229" y="1" width="3" height="8"/><rect x="234" y="1" width="3" height="8"/><rect x="239" y="1" width="3" height="8"/><rect x="249" y="1" width="3" height="8"/><rect x="254" y="1" width="3" height="8"/><rect x="264" y="1" width="3" height="8"/><rect x="269" y="1" width="3" height="8"/><rect x="274" y="1" width="3" height="8"/><rect x="284" y="1" width="3" height="8"/><rect x="289" y="1" width="3" height="8"/><rect x="299" y="1" width="3" height="8"/><rect x="304" y="1" width="3" height="8"/><rect x="309" y="1" width="3" height="8"/><rect x="319" y="1" width="3" height="8"/><rect x="324" y="1" width="3" height="8"/><rect x="334" y="1" width="3" height="8"/><rect x="339" y="1" width="3" height="8"/><rect x="344" y="1" width="3" height="8"/><rect x="354" y="1" width="3" height="8"/><rect x="359" y="1" width="3" height="8"/><rect x="369" y="1" width="3" height="8"/></g></svg>
<div style="left:4px;top:142px;width:300px;height:300px;background:#fff;border:1px solid;border-color:#808080 #fff #fff #808080"></div>
<div style="left:5px;top:143px;width:282px;height:16px;background:#d4d0c8;border-bottom:1px solid #808080"></div>
<div class="t" style="left:9px;top:145px;;letter-spacing:-1.45px">Mea</div>
<div class="t" style="left:39px;top:145px;;letter-spacing:-0.14px">Tick</div>
<div class="t" style="left:67px;top:145px;;letter-spacing:-0.17px">Step</div>
<div class="t" style="left:97px;top:145px;;letter-spacing:-0.54px">Event</div>
<div class="t" style="left:197px;top:145px;;letter-spacing:-0.50px">Gate</div>
<div class="t" style="left:229px;top:145px;;letter-spacing:0.24px">Vel/Value</div>
<div style="left:33px;top:144px;width:1px;height:13px;background:#808080"></div>
<div style="left:34px;top:144px;width:1px;height:13px;background:#ffffff"></div>
<div style="left:63px;top:144px;width:1px;height:13px;background:#808080"></div>
<div style="left:64px;top:144px;width:1px;height:13px;background:#ffffff"></div>
<div style="left:93px;top:144px;width:1px;height:13px;background:#808080"></div>
<div style="left:94px;top:144px;width:1px;height:13px;background:#ffffff"></div>
<div style="left:193px;top:144px;width:1px;height:13px;background:#808080"></div>
<div style="left:194px;top:144px;width:1px;height:13px;background:#ffffff"></div>
<div style="left:223px;top:144px;width:1px;height:13px;background:#808080"></div>
<div style="left:224px;top:144px;width:1px;height:13px;background:#ffffff"></div>
<div style="left:284px;top:144px;width:1px;height:13px;background:#808080"></div>
<div style="left:285px;top:144px;width:1px;height:13px;background:#ffffff"></div>
<div style="left:5px;top:159px;width:89px;height:282px;background:#ecf2fc"></div>
<div style="left:93px;top:159px;width:1px;height:282px;background:#b4ccee"></div>
<div style="left:5px;top:159px;width:282px;height:283px;overflow:hidden">
<div class="mr" style="right:256px;top:1px">1</div>
<div class="mr" style="right:226px;top:1px">480</div>
<div class="mr" style="right:196px;top:1px">60</div>
<div class="m" style="left:93px;top:1px;color:#d00000;white-space:pre">Part Level</div>
<div class="mr" style="right:7px;top:1px;color:#d00000">105</div>
<div class="mr" style="right:256px;top:16px">1</div>
<div class="mr" style="right:226px;top:16px">540</div>
<div class="mr" style="right:196px;top:16px">60</div>
<div class="m" style="left:93px;top:16px;color:#009898;white-space:pre">Part Panpot</div>
<div class="mr" style="right:7px;top:16px;color:#009898">0</div>
<div class="mr" style="right:256px;top:31px">1</div>
<div class="mr" style="right:226px;top:31px">600</div>
<div class="mr" style="right:196px;top:31px">60</div>
<div class="m" style="left:93px;top:31px;color:#a000a8;white-space:pre">PC:303SqDistBs2 [41/4/39]</div>
<div class="mr" style="right:256px;top:46px">1</div>
<div class="mr" style="right:226px;top:46px">660</div>
<div class="mr" style="right:196px;top:46px">60</div>
<div class="m" style="left:93px;top:46px;color:#000;white-space:pre">Reverb Send</div>
<div class="mr" style="right:7px;top:46px;color:#000">10</div>
<div class="mr" style="right:256px;top:61px">1</div>
<div class="mr" style="right:226px;top:61px">720</div>
<div class="mr" style="right:196px;top:61px">60</div>
<div class="m" style="left:93px;top:61px;color:#000;white-space:pre">Chorus Send</div>
<div class="mr" style="right:7px;top:61px;color:#000">30</div>
<div class="mr" style="right:256px;top:76px">1</div>
<div class="mr" style="right:226px;top:76px">780</div>
<div class="mr" style="right:196px;top:76px">60</div>
<div class="m" style="left:93px;top:76px;color:#000;white-space:pre">Delay Send</div>
<div class="mr" style="right:7px;top:76px;color:#000">0</div>
<div class="mr" style="right:256px;top:91px">1</div>
<div class="mr" style="right:226px;top:91px">840</div>
<div class="mr" style="right:196px;top:91px">60</div>
<div class="m" style="left:93px;top:91px;color:#000;white-space:pre">Cutoff Frequency</div>
<div class="mr" style="right:7px;top:91px;color:#000">0</div>
<div class="mr" style="right:256px;top:106px">1</div>
<div class="mr" style="right:226px;top:106px">900</div>
<div class="mr" style="right:196px;top:106px">----</div>
<div class="m" style="left:93px;top:106px;color:#000;white-space:pre">Resonance</div>
<div class="mr" style="right:7px;top:106px;color:#000">0</div>
<div style="left:0px;top:119px;width:282px;height:1px;background:#707070"></div>
<div style="left:90px;top:120px;width:100px;height:14px;border:1px solid #b0b0b0"></div>
<div class="mr" style="right:256px;top:121px">26</div>
<div class="mr" style="right:226px;top:121px">0</div>
<div class="mr" style="right:196px;top:121px">240</div>
<div class="m" style="left:93px;top:121px;color:#000;white-space:pre">D  2 [ 38]</div>
<div class="mr" style="right:67px;top:121px">240</div>
<div class="mr" style="right:7px;top:121px;color:#000">100</div>
<div class="mr" style="right:256px;top:136px">26</div>
<div class="mr" style="right:226px;top:136px">240</div>
<div class="mr" style="right:196px;top:136px">240</div>
<div class="m" style="left:93px;top:136px;color:#000;white-space:pre">D  1 [ 26]</div>
<div class="mr" style="right:67px;top:136px">220</div>
<div class="mr" style="right:7px;top:136px;color:#000">100</div>
<div class="mr" style="right:256px;top:151px">26</div>
<div class="mr" style="right:226px;top:151px">480</div>
<div class="mr" style="right:196px;top:151px">240</div>
<div class="m" style="left:93px;top:151px;color:#000;white-space:pre">D  2 [ 38]</div>
<div class="mr" style="right:67px;top:151px">70</div>
<div class="mr" style="right:7px;top:151px;color:#000">100</div>
<div class="mr" style="right:256px;top:166px">26</div>
<div class="mr" style="right:226px;top:166px">720</div>
<div class="mr" style="right:196px;top:166px">480</div>
<div class="m" style="left:93px;top:166px;color:#000;white-space:pre">C  2 [ 36]</div>
<div class="mr" style="right:67px;top:166px">480</div>
<div class="mr" style="right:7px;top:166px;color:#000">100</div>
<div class="mr" style="right:256px;top:181px">26</div>
<div class="mr" style="right:226px;top:181px">1200</div>
<div class="mr" style="right:196px;top:181px">240</div>
<div class="m" style="left:93px;top:181px;color:#000;white-space:pre">D  2 [ 38]</div>
<div class="mr" style="right:67px;top:181px">230</div>
<div class="mr" style="right:7px;top:181px;color:#000">100</div>
<div class="mr" style="right:256px;top:196px">26</div>
<div class="mr" style="right:226px;top:196px">1440</div>
<div class="mr" style="right:196px;top:196px">240</div>
<div class="m" style="left:93px;top:196px;color:#000;white-space:pre">A  2 [ 45]</div>
<div class="mr" style="right:67px;top:196px">140</div>
<div class="mr" style="right:7px;top:196px;color:#000">100</div>
<div class="mr" style="right:256px;top:211px">26</div>
<div class="mr" style="right:226px;top:211px">1680</div>
<div class="mr" style="right:196px;top:211px">240</div>
<div class="m" style="left:93px;top:211px;color:#000;white-space:pre">C  2 [ 36]</div>
<div class="mr" style="right:67px;top:211px">120</div>
<div class="mr" style="right:7px;top:211px;color:#000">100</div>
<div style="left:0px;top:224px;width:282px;height:1px;background:#707070"></div>
<div class="mr" style="right:256px;top:226px">27</div>
<div class="mr" style="right:226px;top:226px">0</div>
<div class="mr" style="right:196px;top:226px">240</div>
<div class="m" style="left:93px;top:226px;color:#000;white-space:pre">D  2 [ 38]</div>
<div class="mr" style="right:67px;top:226px">240</div>
<div class="mr" style="right:7px;top:226px;color:#000">100</div>
<div class="mr" style="right:256px;top:241px">27</div>
<div class="mr" style="right:226px;top:241px">240</div>
<div class="mr" style="right:196px;top:241px">240</div>
<div class="m" style="left:93px;top:241px;color:#000;white-space:pre">D  1 [ 26]</div>
<div class="mr" style="right:67px;top:241px">220</div>
<div class="mr" style="right:7px;top:241px;color:#000">100</div>
<div class="mr" style="right:256px;top:256px">27</div>
<div class="mr" style="right:226px;top:256px">480</div>
<div class="mr" style="right:196px;top:256px">240</div>
<div class="m" style="left:93px;top:256px;color:#000;white-space:pre">D  2 [ 38]</div>
<div class="mr" style="right:67px;top:256px">70</div>
<div class="mr" style="right:7px;top:256px;color:#000">100</div>
<div class="mr" style="right:256px;top:271px">27</div>
<div class="mr" style="right:226px;top:271px">720</div>
<div class="mr" style="right:196px;top:271px">480</div>
<div class="m" style="left:93px;top:271px;color:#000;white-space:pre">C  2 [ 36]</div>
<div class="mr" style="right:67px;top:271px">480</div>
<div class="mr" style="right:7px;top:271px;color:#000">100</div>
</div>
<div class="chk" style="left:287px;top:143px;width:16px;height:298px;"></div>
<div class="raised" style="left:287px;top:143px;width:16px;height:16px;"></div>
<svg style="left:291px;top:149px" width="8" height="4" viewBox="0 0 8 4" ><path d="M0 4 H7 L3.5 0.5 Z" fill="#000"/></svg>
<div class="raised" style="left:287px;top:425px;width:16px;height:16px;"></div>
<svg style="left:291px;top:431px" width="8" height="4" viewBox="0 0 8 4" ><path d="M0 0 H7 L3.5 3.5 Z" fill="#000"/></svg>
<div class="raised" style="left:287px;top:159px;width:16px;height:16px;"></div>
<svg style="left:142px;top:443px" width="28" height="3" viewBox="0 0 28 3" ><rect x="0" y="0" width="1" height="1" fill="#fff"/><rect x="0" y="1" width="1" height="1" fill="#404040"/><rect x="4" y="0" width="1" height="1" fill="#fff"/><rect x="4" y="1" width="1" height="1" fill="#404040"/><rect x="8" y="0" width="1" height="1" fill="#fff"/><rect x="8" y="1" width="1" height="1" fill="#404040"/><rect x="12" y="0" width="1" height="1" fill="#fff"/><rect x="12" y="1" width="1" height="1" fill="#404040"/><rect x="16" y="0" width="1" height="1" fill="#fff"/><rect x="16" y="1" width="1" height="1" fill="#404040"/><rect x="20" y="0" width="1" height="1" fill="#fff"/><rect x="20" y="1" width="1" height="1" fill="#404040"/><rect x="24" y="0" width="1" height="1" fill="#fff"/><rect x="24" y="1" width="1" height="1" fill="#404040"/></svg>
<div style="left:132px;top:442px;width:1px;height:4px;background:#808080"></div>
<div style="left:133px;top:442px;width:1px;height:4px;background:#ffffff"></div>
<div style="left:174px;top:442px;width:1px;height:4px;background:#808080"></div>
<div style="left:173px;top:442px;width:1px;height:4px;background:#ffffff"></div>
<div style="left:4px;top:446px;width:300px;height:298px;background:#fff;border:1px solid;border-color:#808080 #fff #fff #808080"></div>
<div style="left:5px;top:447px;width:282px;height:296px;overflow:hidden">
<div style="left:0px;top:0px;width:282px;height:24px;background:#ecf2fc;border-top:1px solid #b4ccee"></div>
<div style="left:265px;top:0px;width:1px;height:24px;background:#b4ccee"></div>
<div class="t" style="left:1px;top:1px;;letter-spacing:-1.12px">Pad</div>
<div class="t" style="left:9px;top:12px;color:#a8a8a8;letter-spacing:-0.40px">PortA</div>
<div class="t" style="left:46px;top:12px;color:#a8a8a8;letter-spacing:-1.01px">Ch.02</div>
<svg style="left:268px;top:5px" width="13" height="15" viewBox="0 0 14 16"><path d="M0.5 5.8 V9.2 Q4 10 8 14.5 A3.6 7 0 0 0 8 0.5 Q4 5 0.5 5.8 Z" fill="url(#gSpk2)" stroke="#806010" stroke-width=".9"/><ellipse cx="8.3" cy="7.5" rx="2.6" ry="5.6" fill="#f8e8a0" stroke="#a07818" stroke-width=".7"/><ellipse cx="8" cy="7.5" rx="1.1" ry="2.6" fill="#b08820"/><path d="M2 6.5 Q5 5.5 7.5 2.5" stroke="#fff8d8" stroke-width="1" fill="none"/></svg>
<div style="left:0px;top:24px;width:282px;height:24px;background:#fff;border-top:1px solid #b4ccee"></div>
<div style="left:265px;top:24px;width:1px;height:24px;background:#b4ccee"></div>
<div class="t" style="left:1px;top:25px;;letter-spacing:-1.00px">笛</div>
<div class="t" style="left:9px;top:36px;color:#a8a8a8;letter-spacing:-0.40px">PortA</div>
<div class="t" style="left:46px;top:36px;color:#a8a8a8;letter-spacing:-1.01px">Ch.03</div>
<svg style="left:268px;top:29px" width="13" height="15" viewBox="0 0 14 16"><path d="M0.5 5.8 V9.2 Q4 10 8 14.5 A3.6 7 0 0 0 8 0.5 Q4 5 0.5 5.8 Z" fill="url(#gSpk2)" stroke="#806010" stroke-width=".9"/><ellipse cx="8.3" cy="7.5" rx="2.6" ry="5.6" fill="#f8e8a0" stroke="#a07818" stroke-width=".7"/><ellipse cx="8" cy="7.5" rx="1.1" ry="2.6" fill="#b08820"/><path d="M2 6.5 Q5 5.5 7.5 2.5" stroke="#fff8d8" stroke-width="1" fill="none"/></svg>
<div style="left:0px;top:48px;width:282px;height:24px;background:#ecf2fc;border-top:1px solid #b4ccee"></div>
<div style="left:265px;top:48px;width:1px;height:24px;background:#b4ccee"></div>
<div class="t" style="left:1px;top:49px;">三味線<span style="letter-spacing:-4.00px">イントロ</span></div>
<div class="t" style="left:9px;top:60px;color:#a8a8a8;letter-spacing:-0.40px">PortA</div>
<div class="t" style="left:46px;top:60px;color:#a8a8a8;letter-spacing:-1.01px">Ch.04</div>
<svg style="left:268px;top:53px" width="13" height="15" viewBox="0 0 14 16"><path d="M0.5 5.8 V9.2 Q4 10 8 14.5 A3.6 7 0 0 0 8 0.5 Q4 5 0.5 5.8 Z" fill="url(#gSpk2)" stroke="#806010" stroke-width=".9"/><ellipse cx="8.3" cy="7.5" rx="2.6" ry="5.6" fill="#f8e8a0" stroke="#a07818" stroke-width=".7"/><ellipse cx="8" cy="7.5" rx="1.1" ry="2.6" fill="#b08820"/><path d="M2 6.5 Q5 5.5 7.5 2.5" stroke="#fff8d8" stroke-width="1" fill="none"/></svg>
<div style="left:0px;top:72px;width:282px;height:24px;background:#fff;border-top:1px solid #b4ccee"></div>
<div style="left:265px;top:72px;width:1px;height:24px;background:#b4ccee"></div>
<div class="t" style="left:1px;top:73px;;letter-spacing:-1.12px">Pad</div>
<div class="t" style="left:9px;top:84px;color:#a8a8a8;letter-spacing:-0.40px">PortA</div>
<div class="t" style="left:46px;top:84px;color:#a8a8a8;letter-spacing:-1.01px">Ch.05</div>
<svg style="left:268px;top:77px" width="13" height="15" viewBox="0 0 14 16"><path d="M0.5 5.8 V9.2 Q4 10 8 14.5 A3.6 7 0 0 0 8 0.5 Q4 5 0.5 5.8 Z" fill="url(#gSpk2)" stroke="#806010" stroke-width=".9"/><ellipse cx="8.3" cy="7.5" rx="2.6" ry="5.6" fill="#f8e8a0" stroke="#a07818" stroke-width=".7"/><ellipse cx="8" cy="7.5" rx="1.1" ry="2.6" fill="#b08820"/><path d="M2 6.5 Q5 5.5 7.5 2.5" stroke="#fff8d8" stroke-width="1" fill="none"/></svg>
<div style="left:0px;top:96px;width:282px;height:24px;background:#ecf2fc;border-top:1px solid #b4ccee"></div>
<div style="left:265px;top:96px;width:1px;height:24px;background:#b4ccee"></div>
<div class="t" style="left:1px;top:97px;;letter-spacing:-0.23px">Left Koto</div>
<div class="t" style="left:9px;top:108px;color:#a8a8a8;letter-spacing:-0.40px">PortA</div>
<div class="t" style="left:46px;top:108px;color:#a8a8a8;letter-spacing:-1.01px">Ch.06</div>
<svg style="left:268px;top:101px" width="13" height="15" viewBox="0 0 14 16"><path d="M0.5 5.8 V9.2 Q4 10 8 14.5 A3.6 7 0 0 0 8 0.5 Q4 5 0.5 5.8 Z" fill="url(#gSpk2)" stroke="#806010" stroke-width=".9"/><ellipse cx="8.3" cy="7.5" rx="2.6" ry="5.6" fill="#f8e8a0" stroke="#a07818" stroke-width=".7"/><ellipse cx="8" cy="7.5" rx="1.1" ry="2.6" fill="#b08820"/><path d="M2 6.5 Q5 5.5 7.5 2.5" stroke="#fff8d8" stroke-width="1" fill="none"/></svg>
<div style="left:0px;top:120px;width:282px;height:24px;background:#fff;border-top:1px solid #b4ccee"></div>
<div style="left:265px;top:120px;width:1px;height:24px;background:#b4ccee"></div>
<div class="t" style="left:1px;top:121px;;letter-spacing:-0.25px">I Main koto</div>
<div class="t" style="left:9px;top:132px;color:#a8a8a8;letter-spacing:-0.40px">PortA</div>
<div class="t" style="left:46px;top:132px;color:#a8a8a8;letter-spacing:-1.01px">Ch.07</div>
<svg style="left:268px;top:125px" width="13" height="15" viewBox="0 0 14 16"><path d="M0.5 5.8 V9.2 Q4 10 8 14.5 A3.6 7 0 0 0 8 0.5 Q4 5 0.5 5.8 Z" fill="url(#gSpk2)" stroke="#806010" stroke-width=".9"/><ellipse cx="8.3" cy="7.5" rx="2.6" ry="5.6" fill="#f8e8a0" stroke="#a07818" stroke-width=".7"/><ellipse cx="8" cy="7.5" rx="1.1" ry="2.6" fill="#b08820"/><path d="M2 6.5 Q5 5.5 7.5 2.5" stroke="#fff8d8" stroke-width="1" fill="none"/></svg>
<div style="left:0px;top:144px;width:282px;height:24px;background:#ecf2fc;border-top:1px solid #b4ccee"></div>
<div style="left:265px;top:144px;width:1px;height:24px;background:#b4ccee"></div>
<div class="t" style="left:1px;top:145px;;letter-spacing:-0.62px">I2 Pad</div>
<div class="t" style="left:9px;top:156px;color:#a8a8a8;letter-spacing:-0.40px">PortA</div>
<div class="t" style="left:46px;top:156px;color:#a8a8a8;letter-spacing:-1.01px">Ch.08</div>
<svg style="left:268px;top:149px" width="13" height="15" viewBox="0 0 14 16"><path d="M0.5 5.8 V9.2 Q4 10 8 14.5 A3.6 7 0 0 0 8 0.5 Q4 5 0.5 5.8 Z" fill="url(#gSpk2)" stroke="#806010" stroke-width=".9"/><ellipse cx="8.3" cy="7.5" rx="2.6" ry="5.6" fill="#f8e8a0" stroke="#a07818" stroke-width=".7"/><ellipse cx="8" cy="7.5" rx="1.1" ry="2.6" fill="#b08820"/><path d="M2 6.5 Q5 5.5 7.5 2.5" stroke="#fff8d8" stroke-width="1" fill="none"/></svg>
<div style="left:0px;top:168px;width:282px;height:24px;background:#3f7fdf;border-top:1px solid #b4ccee"></div>
<div style="left:265px;top:168px;width:1px;height:24px;background:#b4ccee"></div>
<div class="t" style="left:1px;top:169px;color:#fff;letter-spacing:-0.42px">Bass</div>
<div class="t" style="left:9px;top:180px;color:#fff;letter-spacing:-0.40px">PortA</div>
<div class="t" style="left:46px;top:180px;color:#fff;letter-spacing:-1.01px">Ch.09</div>
<svg style="left:268px;top:173px" width="13" height="15" viewBox="0 0 14 16"><path d="M0.5 5.8 V9.2 Q4 10 8 14.5 A3.6 7 0 0 0 8 0.5 Q4 5 0.5 5.8 Z" fill="url(#gSpk2)" stroke="#806010" stroke-width=".9"/><ellipse cx="8.3" cy="7.5" rx="2.6" ry="5.6" fill="#f8e8a0" stroke="#a07818" stroke-width=".7"/><ellipse cx="8" cy="7.5" rx="1.1" ry="2.6" fill="#b08820"/><path d="M2 6.5 Q5 5.5 7.5 2.5" stroke="#fff8d8" stroke-width="1" fill="none"/></svg>
<div style="left:0px;top:192px;width:282px;height:24px;background:#ecf2fc;border-top:1px solid #b4ccee"></div>
<div style="left:265px;top:192px;width:1px;height:24px;background:#b4ccee"></div>
<div class="t" style="left:1px;top:193px;;letter-spacing:-0.31px">Bass Unison</div>
<div class="t" style="left:9px;top:204px;color:#a8a8a8;letter-spacing:-0.40px">PortB</div>
<div class="t" style="left:46px;top:204px;color:#a8a8a8;letter-spacing:-1.01px">Ch.09</div>
<svg style="left:268px;top:197px" width="13" height="15" viewBox="0 0 14 16"><path d="M0.5 5.8 V9.2 Q4 10 8 14.5 A3.6 7 0 0 0 8 0.5 Q4 5 0.5 5.8 Z" fill="url(#gSpk2)" stroke="#806010" stroke-width=".9"/><ellipse cx="8.3" cy="7.5" rx="2.6" ry="5.6" fill="#f8e8a0" stroke="#a07818" stroke-width=".7"/><ellipse cx="8" cy="7.5" rx="1.1" ry="2.6" fill="#b08820"/><path d="M2 6.5 Q5 5.5 7.5 2.5" stroke="#fff8d8" stroke-width="1" fill="none"/></svg>
<div style="left:0px;top:216px;width:282px;height:24px;background:#fff;border-top:1px solid #b4ccee"></div>
<div style="left:265px;top:216px;width:1px;height:24px;background:#b4ccee"></div>
<div class="t" style="left:1px;top:217px;;letter-spacing:-0.05px">Rythm - Ethnic</div>
<div class="t" style="left:9px;top:228px;color:#a8a8a8;letter-spacing:-0.40px">PortA</div>
<div class="t" style="left:46px;top:228px;color:#a8a8a8;letter-spacing:-1.01px">Ch.10</div>
<svg style="left:268px;top:221px" width="13" height="15" viewBox="0 0 14 16"><path d="M0.5 5.8 V9.2 Q4 10 8 14.5 A3.6 7 0 0 0 8 0.5 Q4 5 0.5 5.8 Z" fill="url(#gSpk2)" stroke="#806010" stroke-width=".9"/><ellipse cx="8.3" cy="7.5" rx="2.6" ry="5.6" fill="#f8e8a0" stroke="#a07818" stroke-width=".7"/><ellipse cx="8" cy="7.5" rx="1.1" ry="2.6" fill="#b08820"/><path d="M2 6.5 Q5 5.5 7.5 2.5" stroke="#fff8d8" stroke-width="1" fill="none"/></svg>
<div style="left:0px;top:240px;width:282px;height:24px;background:#ecf2fc;border-top:1px solid #b4ccee"></div>
<div style="left:265px;top:240px;width:1px;height:24px;background:#b4ccee"></div>
<div class="t" style="left:1px;top:241px;;letter-spacing:-0.05px">Rhythm - ASIA</div>
<div class="t" style="left:9px;top:252px;color:#a8a8a8;letter-spacing:-0.40px">PortA</div>
<div class="t" style="left:46px;top:252px;color:#a8a8a8;letter-spacing:-0.83px">Ch.11</div>
<svg style="left:268px;top:245px" width="13" height="15" viewBox="0 0 14 16"><path d="M0.5 5.8 V9.2 Q4 10 8 14.5 A3.6 7 0 0 0 8 0.5 Q4 5 0.5 5.8 Z" fill="url(#gSpk2)" stroke="#806010" stroke-width=".9"/><ellipse cx="8.3" cy="7.5" rx="2.6" ry="5.6" fill="#f8e8a0" stroke="#a07818" stroke-width=".7"/><ellipse cx="8" cy="7.5" rx="1.1" ry="2.6" fill="#b08820"/><path d="M2 6.5 Q5 5.5 7.5 2.5" stroke="#fff8d8" stroke-width="1" fill="none"/></svg>
<div style="left:0px;top:264px;width:282px;height:24px;background:#fff;border-top:1px solid #b4ccee"></div>
<div style="left:265px;top:264px;width:1px;height:24px;background:#b4ccee"></div>
<div class="t" style="left:1px;top:265px;;letter-spacing:-0.37px">Low String</div>
<div class="t" style="left:9px;top:276px;color:#a8a8a8;letter-spacing:-0.40px">PortA</div>
<div class="t" style="left:46px;top:276px;color:#a8a8a8;letter-spacing:-1.01px">Ch.12</div>
<svg style="left:268px;top:269px" width="13" height="15" viewBox="0 0 14 16"><path d="M0.5 5.8 V9.2 Q4 10 8 14.5 A3.6 7 0 0 0 8 0.5 Q4 5 0.5 5.8 Z" fill="url(#gSpk2)" stroke="#806010" stroke-width=".9"/><ellipse cx="8.3" cy="7.5" rx="2.6" ry="5.6" fill="#f8e8a0" stroke="#a07818" stroke-width=".7"/><ellipse cx="8" cy="7.5" rx="1.1" ry="2.6" fill="#b08820"/><path d="M2 6.5 Q5 5.5 7.5 2.5" stroke="#fff8d8" stroke-width="1" fill="none"/></svg>
<div style="left:0px;top:288px;width:282px;height:24px;background:#ecf2fc;border-top:1px solid #b4ccee"></div>
<div style="left:265px;top:288px;width:1px;height:24px;background:#b4ccee"></div>
<div class="t" style="left:1px;top:289px;;letter-spacing:-0.61px">Melody</div>
<div class="t" style="left:9px;top:300px;color:#a8a8a8;letter-spacing:-0.40px">PortA</div>
<div class="t" style="left:46px;top:300px;color:#a8a8a8;letter-spacing:-1.01px">Ch.13</div>
<svg style="left:268px;top:293px" width="13" height="15" viewBox="0 0 14 16"><path d="M0.5 5.8 V9.2 Q4 10 8 14.5 A3.6 7 0 0 0 8 0.5 Q4 5 0.5 5.8 Z" fill="url(#gSpk2)" stroke="#806010" stroke-width=".9"/><ellipse cx="8.3" cy="7.5" rx="2.6" ry="5.6" fill="#f8e8a0" stroke="#a07818" stroke-width=".7"/><ellipse cx="8" cy="7.5" rx="1.1" ry="2.6" fill="#b08820"/><path d="M2 6.5 Q5 5.5 7.5 2.5" stroke="#fff8d8" stroke-width="1" fill="none"/></svg>
</div>
<div class="chk" style="left:287px;top:447px;width:16px;height:296px;"></div>
<div class="raised" style="left:287px;top:447px;width:16px;height:16px;"></div>
<svg style="left:291px;top:453px" width="8" height="4" viewBox="0 0 8 4" ><path d="M0 4 H7 L3.5 0.5 Z" fill="#000"/></svg>
<div class="raised" style="left:287px;top:727px;width:16px;height:16px;"></div>
<svg style="left:291px;top:733px" width="8" height="4" viewBox="0 0 8 4" ><path d="M0 0 H7 L3.5 3.5 Z" fill="#000"/></svg>
<div class="raised" style="left:287px;top:490px;width:16px;height:104px;"></div>
<div style="left:308px;top:142px;width:712px;height:421px;border:1px solid;border-color:#808080 #fff #fff #808080;background:#fff"></div>
<div style="left:309px;top:143px;width:694px;height:16px;background:#d4d0c8;border-bottom:1px solid #808080"></div>
<svg style="left:409px;top:159px" width="594" height="403" viewBox="0 0 594 403" shape-rendering="crispEdges"><rect x="0" y="0" width="594" height="403" fill="#fff"/><rect x="0" y="12" width="594" height="12" fill="#ecf2fd"/><rect x="0" y="36" width="594" height="12" fill="#ecf2fd"/><rect x="0" y="72" width="594" height="12" fill="#ecf2fd"/><rect x="0" y="96" width="594" height="12" fill="#ecf2fd"/><rect x="0" y="120" width="594" height="12" fill="#ecf2fd"/><rect x="0" y="156" width="594" height="12" fill="#ecf2fd"/><rect x="0" y="180" width="594" height="12" fill="#ecf2fd"/><rect x="0" y="216" width="594" height="12" fill="#ecf2fd"/><rect x="0" y="240" width="594" height="12" fill="#ecf2fd"/><rect x="0" y="264" width="594" height="12" fill="#ecf2fd"/><rect x="0" y="300" width="594" height="12" fill="#ecf2fd"/><rect x="0" y="324" width="594" height="12" fill="#ecf2fd"/><rect x="0" y="360" width="594" height="12" fill="#ecf2fd"/><rect x="0" y="384" width="594" height="12" fill="#ecf2fd"/><path d="M0 0.5 H594 M0 12.5 H594 M0 24.5 H594 M0 36.5 H594 M0 48.5 H594 M0 72.5 H594 M0 84.5 H594 M0 96.5 H594 M0 108.5 H594 M0 120.5 H594 M0 132.5 H594 M0 144.5 H594 M0 156.5 H594 M0 168.5 H594 M0 180.5 H594 M0 192.5 H594 M0 216.5 H594 M0 228.5 H594 M0 240.5 H594 M0 252.5 H594 M0 264.5 H594 M0 276.5 H594 M0 288.5 H594 M0 300.5 H594 M0 312.5 H594 M0 324.5 H594 M0 336.5 H594 M0 360.5 H594 M0 372.5 H594 M0 384.5 H594 M0 396.5 H594 " stroke="#b4ccf0" stroke-width="1"/><path d="M24.5 0 V403 M72.5 0 V403 M120.5 0 V403 M168.5 0 V403 M216.5 0 V403 M264.5 0 V403 M312.5 0 V403 M360.5 0 V403 M408.5 0 V403 M456.5 0 V403 M504.5 0 V403 M552.5 0 V403 " stroke="#a0a0a0" stroke-width="1" stroke-dasharray="2 2" stroke-dashoffset="2"/><path d="M48.5 0 V403 M96.5 0 V403 M144.5 0 V403 M240.5 0 V403 M288.5 0 V403 M336.5 0 V403 M432.5 0 V403 M480.5 0 V403 M528.5 0 V403 " stroke="#a8a8a8" stroke-width="1"/><path d="M0 60.5 H594 M0 204.5 H594 M0 348.5 H594 " stroke="#000" stroke-width="1"/><path d="M192.5 0 V403 M384.5 0 V403 M576.5 0 V403 " stroke="#101090" stroke-width="1.4"/></svg>
<div style="left:409px;top:159px;width:594px;height:403px;overflow:hidden">
<div style="left:0px;top:168px;width:24px;height:12px;background:#6a9ae8;border:1px solid #0a1890"></div>
<div style="left:24px;top:312px;width:22px;height:12px;background:#6a9ae8;border:1px solid #0a1890"></div>
<div style="left:48px;top:168px;width:7px;height:12px;background:#6a9ae8;border:1px solid #0a1890"></div>
<div style="left:72px;top:192px;width:48px;height:12px;background:#6a9ae8;border:1px solid #0a1890"></div>
<div style="left:120px;top:168px;width:23px;height:12px;background:#6a9ae8;border:1px solid #0a1890"></div>
<div style="left:144px;top:84px;width:14px;height:12px;background:#6a9ae8;border:1px solid #0a1890"></div>
<div style="left:168px;top:192px;width:12px;height:12px;background:#6a9ae8;border:1px solid #0a1890"></div>
<div style="left:192px;top:168px;width:24px;height:12px;background:#6a9ae8;border:1px solid #0a1890"></div>
<div style="left:216px;top:312px;width:22px;height:12px;background:#6a9ae8;border:1px solid #0a1890"></div>
<div style="left:240px;top:168px;width:7px;height:12px;background:#6a9ae8;border:1px solid #0a1890"></div>
<div style="left:264px;top:192px;width:48px;height:12px;background:#6a9ae8;border:1px solid #0a1890"></div>
<div style="left:312px;top:168px;width:23px;height:12px;background:#6a9ae8;border:1px solid #0a1890"></div>
<div style="left:336px;top:84px;width:14px;height:12px;background:#6a9ae8;border:1px solid #0a1890"></div>
<div style="left:360px;top:192px;width:12px;height:12px;background:#6a9ae8;border:1px solid #0a1890"></div>
<div style="left:384px;top:216px;width:23px;height:12px;background:#6a9ae8;border:1px solid #0a1890"></div>
<div style="left:432px;top:216px;width:7px;height:12px;background:#6a9ae8;border:1px solid #0a1890"></div>
<div style="left:456px;top:132px;width:43px;height:12px;background:#6a9ae8;border:1px solid #0a1890"></div>
<div style="left:504px;top:216px;width:24px;height:12px;background:#6a9ae8;border:1px solid #0a1890"></div>
<div style="left:528px;top:276px;width:24px;height:12px;background:#6a9ae8;border:1px solid #0a1890"></div>
<div style="left:552px;top:276px;width:11px;height:12px;background:#6a9ae8;border:1px solid #0a1890"></div>
<div style="left:408px;top:360px;width:23px;height:12px;background:#6a9ae8;border:1px solid #0a1890"></div>
<div style="left:576px;top:216px;width:23px;height:12px;background:#6a9ae8;border:1px solid #0a1890"></div>
<div style="left:0px;top:168px;width:1px;height:12px;background:#f0e040"></div>
</div>
<div class="t" style="left:412px;top:145px;;letter-spacing:-0.18px">26 I2 (C Maj)</div>
<div style="left:601px;top:143px;width:1px;height:16px;background:#101090;width:1.4px"></div>
<div class="t" style="left:604px;top:145px;;letter-spacing:-0.68px">27</div>
<div style="left:793px;top:143px;width:1px;height:16px;background:#101090;width:1.4px"></div>
<div class="t" style="left:796px;top:145px;;letter-spacing:-0.68px">28</div>
<div style="left:985px;top:143px;width:1px;height:16px;background:#101090;width:1.4px"></div>
<div class="t" style="left:988px;top:145px;;letter-spacing:-0.68px">29</div>
<div style="left:409px;top:143px;width:1px;height:420px;background:#e00000"></div>
<div style="left:309px;top:159px;width:100px;height:403px;overflow:hidden">
<svg style="left:0px;top:0px" width="100" height="403" viewBox="0 0 100 403" ><rect x="0" y="0" width="100" height="403" fill="url(#gWk)"/><rect x="0" y="57.00" width="100" height="2.6" fill="#000" opacity=".06"/><rect x="0" y="58.40" width="100" height="1.2" fill="#000" opacity=".06"/><rect x="0" y="36.43" width="100" height="2.6" fill="#000" opacity=".06"/><rect x="0" y="37.83" width="100" height="1.2" fill="#000" opacity=".06"/><rect x="0" y="15.86" width="100" height="2.6" fill="#000" opacity=".06"/><rect x="0" y="17.26" width="100" height="1.2" fill="#000" opacity=".06"/><rect x="0" y="201.00" width="100" height="2.6" fill="#000" opacity=".06"/><rect x="0" y="202.40" width="100" height="1.2" fill="#000" opacity=".06"/><rect x="0" y="180.43" width="100" height="2.6" fill="#000" opacity=".06"/><rect x="0" y="181.83" width="100" height="1.2" fill="#000" opacity=".06"/><rect x="0" y="159.86" width="100" height="2.6" fill="#000" opacity=".06"/><rect x="0" y="161.26" width="100" height="1.2" fill="#000" opacity=".06"/><rect x="0" y="139.29" width="100" height="2.6" fill="#000" opacity=".06"/><rect x="0" y="140.69" width="100" height="1.2" fill="#000" opacity=".06"/><rect x="0" y="118.71" width="100" height="2.6" fill="#000" opacity=".06"/><rect x="0" y="120.11" width="100" height="1.2" fill="#000" opacity=".06"/><rect x="0" y="98.14" width="100" height="2.6" fill="#000" opacity=".06"/><rect x="0" y="99.54" width="100" height="1.2" fill="#000" opacity=".06"/><rect x="0" y="77.57" width="100" height="2.6" fill="#000" opacity=".06"/><rect x="0" y="78.97" width="100" height="1.2" fill="#000" opacity=".06"/><rect x="0" y="345.00" width="100" height="2.6" fill="#000" opacity=".06"/><rect x="0" y="346.40" width="100" height="1.2" fill="#000" opacity=".06"/><rect x="0" y="324.43" width="100" height="2.6" fill="#000" opacity=".06"/><rect x="0" y="325.83" width="100" height="1.2" fill="#000" opacity=".06"/><rect x="0" y="303.86" width="100" height="2.6" fill="#000" opacity=".06"/><rect x="0" y="305.26" width="100" height="1.2" fill="#000" opacity=".06"/><rect x="0" y="283.29" width="100" height="2.6" fill="#000" opacity=".06"/><rect x="0" y="284.69" width="100" height="1.2" fill="#000" opacity=".06"/><rect x="0" y="262.71" width="100" height="2.6" fill="#000" opacity=".06"/><rect x="0" y="264.11" width="100" height="1.2" fill="#000" opacity=".06"/><rect x="0" y="242.14" width="100" height="2.6" fill="#000" opacity=".06"/><rect x="0" y="243.54" width="100" height="1.2" fill="#000" opacity=".06"/><rect x="0" y="221.57" width="100" height="2.6" fill="#000" opacity=".06"/><rect x="0" y="222.97" width="100" height="1.2" fill="#000" opacity=".06"/><rect x="0" y="386.14" width="100" height="2.6" fill="#000" opacity=".06"/><rect x="0" y="387.54" width="100" height="1.2" fill="#000" opacity=".06"/><rect x="0" y="365.57" width="100" height="2.6" fill="#000" opacity=".06"/><rect x="0" y="366.97" width="100" height="1.2" fill="#000" opacity=".06"/><path d="M0 60.00 H100 M48 39.43 H100 M48 18.86 H100 M0 204.00 H100 M48 183.43 H100 M48 162.86 H100 M0 142.29 H100 M48 121.71 H100 M48 101.14 H100 M48 80.57 H100 M0 348.00 H100 M48 327.43 H100 M48 306.86 H100 M0 286.29 H100 M48 265.71 H100 M48 245.14 H100 M48 224.57 H100 M48 389.14 H100 M48 368.57 H100 " stroke="#000" stroke-width="1.3"/><filter id="bl" x="-10%" y="-10%" width="120%" height="120%"><feGaussianBlur stdDeviation="1.2"/></filter><g fill="#000" opacity=".35" filter="url(#bl)"><rect x="1" y="14" width="50" height="12"/><rect x="1" y="38" width="50" height="12"/><rect x="1" y="74" width="50" height="12"/><rect x="1" y="98" width="50" height="12"/><rect x="1" y="122" width="50" height="12"/><rect x="1" y="158" width="50" height="12"/><rect x="1" y="182" width="50" height="12"/><rect x="1" y="218" width="50" height="12"/><rect x="1" y="242" width="50" height="12"/><rect x="1" y="266" width="50" height="12"/><rect x="1" y="302" width="50" height="12"/><rect x="1" y="326" width="50" height="12"/><rect x="1" y="362" width="50" height="12"/><rect x="1" y="386" width="50" height="12"/></g><rect x="0" y="12" width="49" height="12" fill="#000"/><rect x="0" y="13" width="47" height="9" fill="url(#gBk)"/><rect x="0" y="13" width="46" height="1" fill="#a0a0a0" opacity=".7"/><path d="M45 13 L49 15 V21 L45 22 Z" fill="#181818"/><rect x="0" y="36" width="49" height="12" fill="#000"/><rect x="0" y="37" width="47" height="9" fill="url(#gBk)"/><rect x="0" y="37" width="46" height="1" fill="#a0a0a0" opacity=".7"/><path d="M45 37 L49 39 V45 L45 46 Z" fill="#181818"/><rect x="0" y="72" width="49" height="12" fill="#000"/><rect x="0" y="73" width="47" height="9" fill="url(#gBk)"/><rect x="0" y="73" width="46" height="1" fill="#a0a0a0" opacity=".7"/><path d="M45 73 L49 75 V81 L45 82 Z" fill="#181818"/><rect x="0" y="96" width="49" height="12" fill="#000"/><rect x="0" y="97" width="47" height="9" fill="url(#gBk)"/><rect x="0" y="97" width="46" height="1" fill="#a0a0a0" opacity=".7"/><path d="M45 97 L49 99 V105 L45 106 Z" fill="#181818"/><rect x="0" y="120" width="49" height="12" fill="#000"/><rect x="0" y="121" width="47" height="9" fill="url(#gBk)"/><rect x="0" y="121" width="46" height="1" fill="#a0a0a0" opacity=".7"/><path d="M45 121 L49 123 V129 L45 130 Z" fill="#181818"/><rect x="0" y="156" width="49" height="12" fill="#000"/><rect x="0" y="157" width="47" height="9" fill="url(#gBk)"/><rect x="0" y="157" width="46" height="1" fill="#a0a0a0" opacity=".7"/><path d="M45 157 L49 159 V165 L45 166 Z" fill="#181818"/><rect x="0" y="180" width="49" height="12" fill="#000"/><rect x="0" y="181" width="47" height="9" fill="url(#gBk)"/><rect x="0" y="181" width="46" height="1" fill="#a0a0a0" opacity=".7"/><path d="M45 181 L49 183 V189 L45 190 Z" fill="#181818"/><rect x="0" y="216" width="49" height="12" fill="#000"/><rect x="0" y="217" width="47" height="9" fill="url(#gBk)"/><rect x="0" y="217" width="46" height="1" fill="#a0a0a0" opacity=".7"/><path d="M45 217 L49 219 V225 L45 226 Z" fill="#181818"/><rect x="0" y="240" width="49" height="12" fill="#000"/><rect x="0" y="241" width="47" height="9" fill="url(#gBk)"/><rect x="0" y="241" width="46" height="1" fill="#a0a0a0" opacity=".7"/><path d="M45 241 L49 243 V249 L45 250 Z" fill="#181818"/><rect x="0" y="264" width="49" height="12" fill="#000"/><rect x="0" y="265" width="47" height="9" fill="url(#gBk)"/><rect x="0" y="265" width="46" height="1" fill="#a0a0a0" opacity=".7"/><path d="M45 265 L49 267 V273 L45 274 Z" fill="#181818"/><rect x="0" y="300" width="49" height="12" fill="#000"/><rect x="0" y="301" width="47" height="9" fill="url(#gBk)"/><rect x="0" y="301" width="46" height="1" fill="#a0a0a0" opacity=".7"/><path d="M45 301 L49 303 V309 L45 310 Z" fill="#181818"/><rect x="0" y="324" width="49" height="12" fill="#000"/><rect x="0" y="325" width="47" height="9" fill="url(#gBk)"/><rect x="0" y="325" width="46" height="1" fill="#a0a0a0" opacity=".7"/><path d="M45 325 L49 327 V333 L45 334 Z" fill="#181818"/><rect x="0" y="360" width="49" height="12" fill="#000"/><rect x="0" y="361" width="47" height="9" fill="url(#gBk)"/><rect x="0" y="361" width="46" height="1" fill="#a0a0a0" opacity=".7"/><path d="M45 361 L49 363 V369 L45 370 Z" fill="#181818"/><rect x="0" y="384" width="49" height="12" fill="#000"/><rect x="0" y="385" width="47" height="9" fill="url(#gBk)"/><rect x="0" y="385" width="46" height="1" fill="#a0a0a0" opacity=".7"/><path d="M45 385 L49 387 V393 L45 394 Z" fill="#181818"/></svg>
</div>
<div class="t" style="left:391px;top:207px;;letter-spacing:-0.67px">C3</div>
<div class="t" style="left:391px;top:351px;;letter-spacing:-0.67px">C2</div>
<div class="t" style="left:391px;top:495px;;letter-spacing:-0.67px">C1</div>
<div class="chk" style="left:1003px;top:143px;width:16px;height:419px;"></div>
<div class="raised" style="left:1003px;top:143px;width:16px;height:16px;"></div>
<svg style="left:1007px;top:149px" width="8" height="4" viewBox="0 0 8 4" ><path d="M0 4 H7 L3.5 0.5 Z" fill="#000"/></svg>
<div class="raised" style="left:1003px;top:546px;width:16px;height:16px;"></div>
<svg style="left:1007px;top:552px" width="8" height="4" viewBox="0 0 8 4" ><path d="M0 0 H7 L3.5 3.5 Z" fill="#000"/></svg>
<div class="raised" style="left:1003px;top:387px;width:16px;height:97px;"></div>
<svg style="left:652px;top:564px" width="28" height="3" viewBox="0 0 28 3" ><rect x="0" y="0" width="1" height="1" fill="#fff"/><rect x="0" y="1" width="1" height="1" fill="#404040"/><rect x="4" y="0" width="1" height="1" fill="#fff"/><rect x="4" y="1" width="1" height="1" fill="#404040"/><rect x="8" y="0" width="1" height="1" fill="#fff"/><rect x="8" y="1" width="1" height="1" fill="#404040"/><rect x="12" y="0" width="1" height="1" fill="#fff"/><rect x="12" y="1" width="1" height="1" fill="#404040"/><rect x="16" y="0" width="1" height="1" fill="#fff"/><rect x="16" y="1" width="1" height="1" fill="#404040"/><rect x="20" y="0" width="1" height="1" fill="#fff"/><rect x="20" y="1" width="1" height="1" fill="#404040"/><rect x="24" y="0" width="1" height="1" fill="#fff"/><rect x="24" y="1" width="1" height="1" fill="#404040"/></svg>
<div style="left:643px;top:563px;width:1px;height:5px;background:#808080"></div>
<div style="left:644px;top:563px;width:1px;height:5px;background:#ffffff"></div>
<div style="left:684px;top:563px;width:1px;height:5px;background:#808080"></div>
<div style="left:683px;top:563px;width:1px;height:5px;background:#ffffff"></div>
<svg style="left:305px;top:431px" width="3" height="28" viewBox="0 0 3 28" ><rect x="0" y="0" width="1" height="1" fill="#808080"/><rect x="1" y="1" width="1" height="1" fill="#fff"/><rect x="0" y="4" width="1" height="1" fill="#808080"/><rect x="1" y="5" width="1" height="1" fill="#fff"/><rect x="0" y="8" width="1" height="1" fill="#808080"/><rect x="1" y="9" width="1" height="1" fill="#fff"/><rect x="0" y="12" width="1" height="1" fill="#808080"/><rect x="1" y="13" width="1" height="1" fill="#fff"/><rect x="0" y="16" width="1" height="1" fill="#808080"/><rect x="1" y="17" width="1" height="1" fill="#fff"/><rect x="0" y="20" width="1" height="1" fill="#808080"/><rect x="1" y="21" width="1" height="1" fill="#fff"/><rect x="0" y="24" width="1" height="1" fill="#808080"/><rect x="1" y="25" width="1" height="1" fill="#fff"/></svg>
<div style="left:304px;top:422px;width:4px;height:1px;background:#808080"></div>
<div style="left:304px;top:423px;width:4px;height:1px;background:#ffffff"></div>
<div style="left:304px;top:463px;width:4px;height:1px;background:#808080"></div>
<div style="left:304px;top:464px;width:4px;height:1px;background:#ffffff"></div>
<div class="chk" style="left:309px;top:567px;width:22px;height:21px;border:1px solid;border-color:#808080 #ffffff #ffffff #808080"></div>
<svg style="left:313px;top:570px" width="14" height="15" viewBox="0 0 14 15" ><path d="M2 4.5 C0 8 1.5 12 4.5 13 M4.5 9 C2.5 6 5.5 1.5 10.5 3.5 M5.5 8 C5 6 7.5 5 8.5 6.5 C9 8 6.5 9 5.5 8" fill="none" stroke="#000" stroke-width="1"/></svg>
<svg style="left:335px;top:571px" width="15" height="14" viewBox="0 0 15 14" ><path d="M0.5 13.5 L14 0.5" stroke="#000" stroke-width="1.1"/></svg>
<svg style="left:357px;top:576px" width="6" height="4" viewBox="0 0 6 4" ><path d="M0 0 H6 L3 3.2 Z" fill="#000"/></svg>
<svg style="left:369px;top:571px" width="15" height="14" viewBox="0 0 15 14" ><path d="M0.5 13 H4 C10 13 13 9 13 0.5" fill="none" stroke="#000" stroke-width="1.1"/></svg>
<svg style="left:391px;top:571px" width="15" height="14" viewBox="0 0 15 14" ><path d="M1 13.5 C1 6 4 1 13.5 1" fill="none" stroke="#000" stroke-width="1.1"/></svg>
<svg style="left:415px;top:571px" width="15" height="14" viewBox="0 0 15 14" ><path d="M0.5 13 H2.5 V5 H4.5 V9 H6.5 V0.5 H8.5 V11 H10.5 V4 H12.5 V7" fill="none" stroke="#000" stroke-width="1.1"/></svg>
<svg style="left:437px;top:570px" width="17" height="16" viewBox="0 0 17 16" ><path d="M1.5 6 L14.5 1.5" stroke="#909090" stroke-width="1"/><rect x="0.5" y="4.5" width="3" height="3" fill="#fff" stroke="#909090"/><rect x="13" y="0.5" width="3" height="3" fill="#fff" stroke="#909090"/><rect x="1.5" y="9.5" width="14" height="6" fill="#e8e8e8" stroke="#909090"/><path d="M3 13 H13" stroke="#909090" stroke-dasharray="2 1"/></svg>
<div style="left:460px;top:569px;width:1px;height:18px;background:#808080"></div>
<div style="left:461px;top:569px;width:1px;height:18px;background:#ffffff"></div>
<svg style="left:467px;top:571px" width="18" height="14" viewBox="0 0 18 14" ><path d="M3 10.5 H9 V3.5 H15" fill="none" stroke="#2848d0" stroke-width="1.3"/><rect x="0.5" y="8" width="5" height="5" fill="#a8c8ff" stroke="#2848d0"/><rect x="9" y="0.5" width="5" height="5" fill="#a8c8ff" stroke="#2848d0"/></svg>
<div style="left:490px;top:569px;width:1px;height:18px;background:#808080"></div>
<div style="left:491px;top:569px;width:1px;height:18px;background:#ffffff"></div>
<svg style="left:499px;top:571px" width="15" height="15" viewBox="0 0 15 15" ><rect x="0.5" y="0.5" width="14" height="14" fill="none" stroke="#000" stroke-width="1.3" stroke-dasharray="2.2 1.8"/></svg>
<svg style="left:522px;top:570px" width="17" height="17" viewBox="0 0 17 17" ><path d="M1.5 5 Q1.5 1 6 1.5 L9 2 L15.5 8 V12 L10 15.5 L2 9.5 Z" fill="#686868" stroke="#000" stroke-width="1.1"/><path d="M1.5 5 Q1.5 1 6 1.5 L9 2 L15.5 8 L10 11.5 L2 6.5 Z" fill="#d0d0d0" stroke="#000" stroke-width=".8"/><path d="M2 5 Q2 1.6 6 2 L8.6 2.4 Q9.5 5.5 5.5 8.2 L2.3 6.3 Z" fill="#fff"/><path d="M10 11.5 V15.5" stroke="#000" stroke-width=".8"/><path d="M11.5 12 L14.5 10" stroke="#b0b0b0" stroke-width="1"/></svg>
<div style="left:545px;top:569px;width:1px;height:18px;background:#808080"></div>
<div style="left:546px;top:569px;width:1px;height:18px;background:#ffffff"></div>
<div class="sunken" style="left:550px;top:568px;width:198px;height:20px;background:#fff"></div>
<div class="raised" style="left:730px;top:570px;width:16px;height:16px;"></div>
<svg style="left:734px;top:576px" width="8" height="4" viewBox="0 0 8 4" ><path d="M0 0 H7 L3.5 3.5 Z" fill="#000"/></svg>
<div class="t" style="left:554px;top:572px;;letter-spacing:-0.04px">Velocity</div>
<div style="left:754px;top:569px;width:1px;height:18px;background:#808080"></div>
<div style="left:755px;top:569px;width:1px;height:18px;background:#ffffff"></div>
<div class="chk" style="left:758px;top:567px;width:22px;height:21px;border:1px solid;border-color:#808080 #ffffff #ffffff #808080"></div>
<svg style="left:761px;top:570px" width="17" height="16" viewBox="0 0 17 16" ><path d="M1.5 16 V1.5 H7 V16" fill="none" stroke="#2878e0" stroke-width="1.6"/><path d="M7 6.5 H13.5 V16" fill="none" stroke="#000" stroke-width="1.3"/></svg>
<svg style="left:784px;top:570px" width="17" height="16" viewBox="0 0 17 16" ><path d="M6 1 H11 V7 L15 10 V15 H2 V10 L6 7 Z" fill="#303030"/><rect x="1" y="12" width="15" height="3.5" fill="#404040"/></svg>
<svg style="left:807px;top:570px" width="17" height="16" viewBox="0 0 17 16" ><path d="M0.5 8 H16.5" stroke="#d02020" stroke-width="1"/><path d="M1 8 C3 -2 6 -2 8.5 8 C11 18 14 18 16 8" fill="none" stroke="#d02020" stroke-width="1.2"/></svg>
<svg style="left:830px;top:571px" width="17" height="14" viewBox="0 0 17 14" ><path d="M1 1 L15.5 7 L1 13" fill="none" stroke="#202020" stroke-width="1.5"/></svg>
<svg style="left:858px;top:570px" width="7" height="16" viewBox="0 0 7 16" ><rect x="0" y="0" width="7" height="16" fill="#202020"/><rect x="1.5" y="1.5" width="4" height="2.6" fill="#e02020"/><rect x="1.5" y="5" width="4" height="2.6" fill="#e02020"/><rect x="1.5" y="8.5" width="4" height="2.6" fill="#30c030"/><rect x="1.5" y="12" width="4" height="2.6" fill="#30c030"/></svg>
<svg style="left:876px;top:574px" width="17" height="12" viewBox="0 0 17 12" ><rect x="0.5" y="0.5" width="16" height="5" fill="#e8f0ff" stroke="#000"/><rect x="1.5" y="1.5" width="3" height="3" fill="#e02020"/><text x="0" y="12" font-size="6" font-weight="bold" font-family="Liberation Sans,sans-serif">L</text><text x="12.5" y="12" font-size="6" font-weight="bold" font-family="Liberation Sans,sans-serif">R</text></svg>
<svg style="left:900px;top:571px" width="14" height="15" viewBox="0 0 14 15" ><g transform="scale(.93)"><path d="M3.5 8 V4.5 A3.5 3.5 0 0 1 10.5 4.5 V8" fill="none" stroke="#b8a060" stroke-width="1.8"/><rect x="0.5" y="7" width="13" height="8.5" rx="1" fill="#f0c850" stroke="#a07818"/><path d="M7 9.5 V13 M5.5 11 L7 9.5 L8.5 11" stroke="#704800" stroke-width="1" fill="none"/></g></svg>
<svg style="left:922px;top:572px" width="16" height="12" viewBox="0 0 16 12" ><rect x="0.5" y="0.5" width="15" height="11" fill="#fff" stroke="#000" stroke-width="1.2"/><path d="M2.5 3.5 H13.5 M4.5 1.5 L2.5 3.5 L4.5 5.5 M11.5 1.5 L13.5 3.5 L11.5 5.5" fill="none" stroke="#e02020" stroke-width="1.1"/><path d="M1 7.5 H10 C12 7.5 13 9 15 11" fill="none" stroke="#000" stroke-width="1"/></svg>
<svg style="left:945px;top:572px" width="16" height="12" viewBox="0 0 16 12" ><rect x="0.5" y="0.5" width="15" height="11" fill="#fff" stroke="#000" stroke-width="1.2"/><path d="M1.5 9.5 H3 C4.5 9.5 4.5 2.5 6.5 2.5 C8.5 2.5 8.5 9.5 10 9.5" fill="none" stroke="#000" stroke-width="1"/><path d="M12.5 2 V10 M11 4 L12.5 2 L14 4 M11 8 L12.5 10 L14 8" fill="none" stroke="#e02020" stroke-width="1.1"/></svg>
<svg style="left:970px;top:570px" width="13" height="16" viewBox="0 0 13 16" ><rect x="0" y="0" width="13" height="16" fill="#181818"/><rect x="1.5" y="1.2" width="4.5" height="2" fill="#e02020"/><rect x="1.5" y="4.2" width="4.5" height="2" fill="#e02020"/><rect x="1.5" y="7.2" width="4.5" height="2" fill="#28d028"/><rect x="1.5" y="10.2" width="4.5" height="2" fill="#28d028"/><rect x="1.5" y="13.2" width="4.5" height="2" fill="#28d028"/><rect x="7.5" y="1.2" width="4.5" height="2" fill="#e02020"/><rect x="7.5" y="4.2" width="4.5" height="2" fill="#28d028"/><rect x="7.5" y="7.2" width="4.5" height="2" fill="#28d028"/><rect x="7.5" y="10.2" width="4.5" height="2" fill="#28d028"/><rect x="7.5" y="13.2" width="4.5" height="2" fill="#28d028"/></svg>
<div style="left:308px;top:589px;width:712px;height:140px;border:1px solid;border-color:#808080 #fff #fff #808080;background:#fff"></div>
<div style="left:309px;top:590px;width:100px;height:138px;background:#d4d0c8"></div>
<div class="t" style="right:619px;top:593px;;letter-spacing:-0.68px">127</div>
<div class="t" style="right:619px;top:620px;;letter-spacing:-0.68px">96</div>
<div class="t" style="right:619px;top:652px;;letter-spacing:-0.68px">64</div>
<div class="t" style="right:619px;top:685px;;letter-spacing:-0.68px">32</div>
<div class="t" style="right:619px;top:712px;;letter-spacing:-0.69px">0</div>
<div style="left:409px;top:590px;width:611px;height:138px;overflow:hidden">
<svg style="left:0px;top:0px" width="611" height="138" viewBox="0 0 611 138" shape-rendering="crispEdges"><rect x="0" y="0" width="611" height="138" fill="#fff"/><path d="M0 101.5 H611 M0 68.5 H611 M0 36.5 H611 " stroke="#a8c8f4" stroke-width="1"/><path d="M24.5 4 V133 M72.5 4 V133 M120.5 4 V133 M168.5 4 V133 M216.5 4 V133 M264.5 4 V133 M312.5 4 V133 M360.5 4 V133 M408.5 4 V133 M456.5 4 V133 M504.5 4 V133 M552.5 4 V133 M600.5 4 V133 " stroke="#a0a0a0" stroke-width="1" stroke-dasharray="2 2"/><path d="M48.5 4 V133 M96.5 4 V133 M144.5 4 V133 M240.5 4 V133 M288.5 4 V133 M336.5 4 V133 M432.5 4 V133 M480.5 4 V133 M528.5 4 V133 " stroke="#a8a8a8" stroke-width="1"/><path d="M192.5 4 V133 M384.5 4 V133 M576.5 4 V133 " stroke="#101090" stroke-width="1.4"/><path d="M0 4.5 H610 M0 133.5 H610" stroke="#000" stroke-width="1"/><path d="M3 32.5 H24.5 V133 M27 32.5 H46.5 V133 M51 32.5 H55.5 V133 M75 32.5 H120.5 V133 M123 32.5 H143.5 V133 M147 32.5 H158.5 V133 M171 32.5 H180.5 V133 M195 32.5 H216.5 V133 M219 32.5 H238.5 V133 M243 32.5 H247.5 V133 M267 32.5 H312.5 V133 M315 32.5 H335.5 V133 M339 32.5 H350.5 V133 M363 32.5 H372.5 V133 M387 32.5 H407.5 V133 M435 32.5 H439.5 V133 M459 32.5 H499.5 V133 M507 32.5 H528.5 V133 M531 32.5 H552.5 V133 M555 32.5 H563.5 V133 M411 32.5 H431.5 V133 M579 32.5 H599.5 V133 M603 32.5 H622.5 V133 M627 32.5 H630.5 V133 " fill="none" stroke="#000" stroke-width="1"/><path d="M1 32 V133 M25 32 V133 M49 32 V133 M73 32 V133 M121 32 V133 M145 32 V133 M169 32 V133 M193 32 V133 M217 32 V133 M241 32 V133 M265 32 V133 M313 32 V133 M337 32 V133 M361 32 V133 M385 32 V133 M433 32 V133 M457 32 V133 M505 32 V133 M529 32 V133 M553 32 V133 M409 32 V133 M577 32 V133 M601 32 V133 M625 32 V133 " stroke="#2c7ce0" stroke-width="2"/><path d="M0.5 32 V133" stroke="#e0a020" stroke-width="1"/><path d="M0.5 4 V32" stroke="#e00000" stroke-width="1"/></svg>
</div>
<div class="chk" style="left:308px;top:729px;width:712px;height:16px;"></div>
<div class="raised" style="left:308px;top:729px;width:16px;height:16px;"></div>
<svg style="left:314px;top:733px" width="4" height="8" viewBox="0 0 4 8" ><path d="M4 0 V7 L0.5 3.5 Z" fill="#000"/></svg>
<div class="raised" style="left:1004px;top:729px;width:16px;height:16px;"></div>
<svg style="left:1010px;top:733px" width="4" height="8" viewBox="0 0 4 8" ><path d="M0 0 V7 L3.5 3.5 Z" fill="#000"/></svg>
<div class="raised" style="left:440px;top:729px;width:16px;height:16px;"></div>
<div class="sunk1" style="left:795px;top:747px;width:73px;height:17px;"></div>
<div class="sunk1" style="left:870px;top:747px;width:92px;height:17px;"></div>
<div class="sunk1" style="left:964px;top:747px;width:38px;height:17px;"></div>
<div class="t" style="left:800px;top:750px;;letter-spacing:-0.42px">26 : 790</div>
<div class="t" style="left:872px;top:750px;;letter-spacing:-1.18px">81</div>
<svg style="left:1006px;top:751px" width="14" height="14" viewBox="0 0 14 14" ><path d="M13.5 1.5 L1.5 13.5 M13.5 5.5 L5.5 13.5 M13.5 9.5 L9.5 13.5" stroke="#808080" stroke-width="1.6"/><path d="M13.5 0.3 L0.3 13.5 M13.5 4.3 L4.3 13.5 M13.5 8.3 L8.3 13.5" stroke="#fff" stroke-width="1"/></svg>
</div>
</body></html>
